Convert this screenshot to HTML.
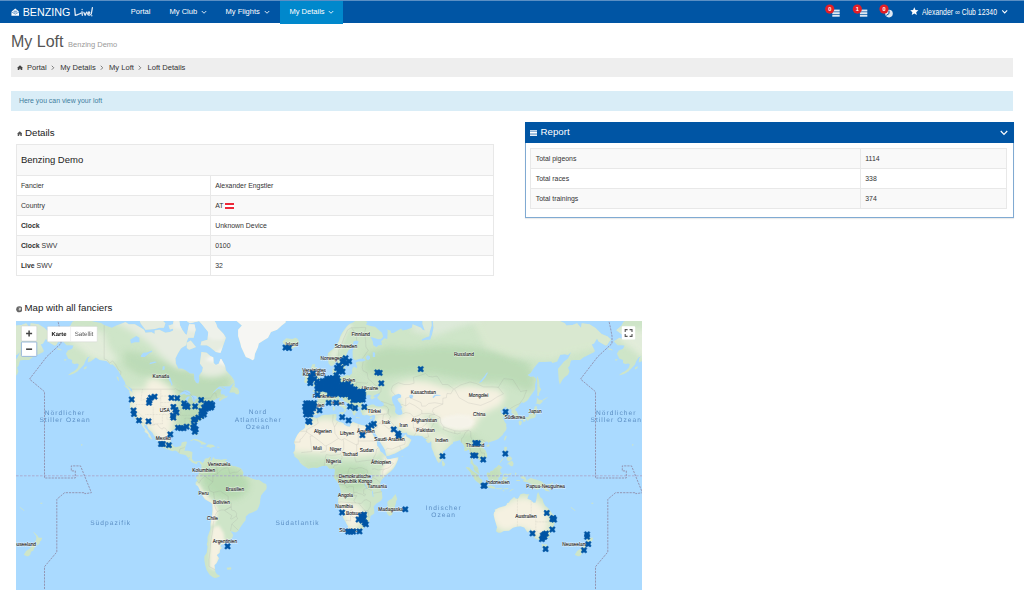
<!DOCTYPE html>
<html>
<head>
<meta charset="utf-8">
<title>My Loft</title>
<style>
*{box-sizing:border-box;margin:0;padding:0}
html,body{width:1024px;height:590px;overflow:hidden;background:#fff}
body{font-family:"Liberation Sans",sans-serif;font-size:7px;color:#333;position:relative}
.abs{position:absolute;white-space:nowrap}
/* navbar */
#nav{left:0;top:0;width:1024px;height:23px;background:#0055a4}
#navtop{left:0;top:0;width:1024px;height:1.2px;background:#5a8fc4}
#active{left:280px;top:1px;width:62.5px;height:22.5px;background:#0088cc}
.nv{color:#fff;font-size:7.55px;line-height:8px;top:8px}
.brand{color:#fff;font-size:10.7px;line-height:12px;top:5.6px;left:22.7px}
/* title */
#h1{left:11px;top:32.5px;font-size:16px;line-height:18px;color:#555}
#h1s{left:68.1px;top:39.8px;font-size:7.5px;line-height:9px;color:#999}
#bc{left:11px;top:57.8px;width:1002px;height:19.7px;background:#eeeeee}
.bct{top:63.9px;font-size:7.58px;line-height:8px;color:#333}
#alert{left:11px;top:90.8px;width:1002px;height:20.4px;background:#d9edf7}
#alertt{left:19px;top:96.8px;font-size:6.9px;line-height:8px;color:#3f7d9e}
.h3{font-size:9.7px;line-height:11px;color:#222}
/* tables */
table{border-collapse:collapse;position:absolute;table-layout:fixed}
td{border:1px solid #e8e8e8;font-size:6.9px;line-height:8px;padding:0 0 0 3.9px;height:20px;vertical-align:middle;color:#333;white-space:nowrap}
tr.odd td{background:#f9f9f9}
#rt td{padding-left:4.6px}
#report{left:524.7px;top:122px;width:489.2px;height:95.5px;border:1px solid #80aad2;background:#fff;box-shadow:0 1px 1px rgba(0,0,0,.08)}
#reporth{left:524.7px;top:122px;width:489.2px;height:20.5px;background:#0055a4}
#map{left:16px;top:321px;width:625.5px;height:269px;background:#aadaff;overflow:hidden}
</style>
</head>
<body>
<!-- NAVBAR -->
<div id="nav" class="abs"></div>
<div id="navtop" class="abs"></div>
<div id="active" class="abs"></div>
<svg class="abs" style="left:10.7px;top:7.6px" width="8.6" height="8.4" viewBox="0 0 19 17"><path d="M1 7.5 L9.5 0.5 L18 7.5 V16.5 H1 Z" fill="#fff"/><path d="M4 4.5 H15 V9 L9.5 12 L4 9 Z" fill="#e8f0fa"/><path d="M1 8 L9.5 12.8 L18 8" fill="none" stroke="#0055a4" stroke-width="1.2"/><path d="M6 6.2 H13 M6 8.2 H13" stroke="#0055a4" stroke-width="1"/></svg>
<div class="abs brand">BENZING</div>
<svg class="abs" style="left:70px;top:4px" width="28" height="16" viewBox="70 4 28 16"><g fill="none" stroke="#e4edf7" stroke-width="1.25" stroke-linecap="round" stroke-linejoin="round"><path d="M74.7 8.5 L75.3 15.4 C77 15 79.5 13.8 81.2 13.1"/><path d="M82 11.6 L82.3 15.3"/><path d="M82.1 9.3 L82.1 9.6"/><path d="M83.9 12.4 L85.1 15.3 L86.7 12.1"/><path d="M87.8 13.8 C89.4 13.8 90.3 12.4 89.4 12 C88.3 11.8 87.4 13.2 87.8 14.4 C88.3 15.5 89.8 15.4 90.6 14.6"/><path d="M92.4 7.6 L91.3 14"/><path d="M91.8 15.6 L91.8 15.8"/></g></svg>
<div class="abs nv" style="left:130.7px">Portal</div>
<div class="abs nv" style="left:169.5px">My Club</div>
<div class="abs nv" style="left:225.5px">My Flights</div>
<div class="abs nv" style="left:289.4px">My Details</div>
<svg class="abs chev" style="left:201px;top:9.8px" width="6" height="4.5" viewBox="0 0 12 9"><path d="M1.5 2 L6 6.5 L10.5 2" fill="none" stroke="#fff" stroke-width="1.7"/></svg>
<svg class="abs chev" style="left:263.7px;top:9.8px" width="6" height="4.5" viewBox="0 0 12 9"><path d="M1.5 2 L6 6.5 L10.5 2" fill="none" stroke="#fff" stroke-width="1.7"/></svg>
<svg class="abs chev" style="left:328.1px;top:9.8px" width="6" height="4.5" viewBox="0 0 12 9"><path d="M1.5 2 L6 6.5 L10.5 2" fill="none" stroke="#fff" stroke-width="1.7"/></svg>
<!-- right icons -->
<svg class="abs" style="left:815px;top:0" width="209" height="26" viewBox="815 0 209 26">
<g fill="#dfe8f3"><rect x="832.3" y="9.6" width="7.4" height="1.9"/><rect x="832.3" y="12.2" width="7.4" height="1.9"/><rect x="832.3" y="14.8" width="7.4" height="1.9"/>
<rect x="859.9" y="9.6" width="7.4" height="1.9"/><rect x="859.9" y="12.2" width="7.4" height="1.9"/><rect x="859.9" y="14.8" width="7.4" height="1.9"/>
<circle cx="889" cy="13.6" r="3.8"/></g>
<path d="M889 13.6 L889 10.6 M889 13.6 L886.3 15.4" stroke="#0055a4" stroke-width="1" fill="none"/>
<g fill="#e21e26"><circle cx="829.7" cy="9.1" r="4.6"/><circle cx="857.3" cy="9.1" r="4.6"/><circle cx="884" cy="9.1" r="4.6"/></g>
<g font-family="Liberation Sans" font-size="5.6" font-weight="bold" fill="#fff" text-anchor="middle"><text x="829.7" y="11">0</text><text x="857.3" y="11">1</text><text x="884" y="11">0</text></g>
<path transform="translate(910.2,7.3) scale(0.41)" d="M10 0 L12.9 6.6 L20 7.3 L14.6 12 L16.2 19 L10 15.3 L3.8 19 L5.4 12 L0 7.3 L7.1 6.6 Z" fill="#fff"/>
<path d="M1002.2 10.4 L1004.7 12.9 L1007.2 10.4" fill="none" stroke="#fff" stroke-width="1.05"/>
</svg>
<div class="abs nv" style="left:922px;top:8.1px;font-size:8.3px;transform:scaleX(.83);transform-origin:0 0">Alexander ∞ Club 12340</div>

<!-- TITLE -->
<div id="h1" class="abs">My Loft</div>
<div id="h1s" class="abs">Benzing Demo</div>
<div id="bc" class="abs"></div>
<svg class="abs" style="left:17px;top:64.5px" width="6" height="5.5" viewBox="0 0 12 11"><path d="M0 6 L6 0.5 L12 6 L10.5 6 L10.5 11 L7.3 11 L7.3 7.5 L4.7 7.5 L4.7 11 L1.5 11 L1.5 6 Z" fill="#444"/></svg>
<div class="abs bct" style="left:26.9px">Portal</div>
<svg class="abs" style="left:51px;top:64.9px" width="3.5" height="5.5" viewBox="0 0 7 11"><path d="M1.5 1.5 L5.5 5.5 L1.5 9.5" fill="none" stroke="#555" stroke-width="1.5"/></svg>
<div class="abs bct" style="left:60.3px">My Details</div>
<svg class="abs" style="left:99.5px;top:64.9px" width="3.5" height="5.5" viewBox="0 0 7 11"><path d="M1.5 1.5 L5.5 5.5 L1.5 9.5" fill="none" stroke="#555" stroke-width="1.5"/></svg>
<div class="abs bct" style="left:109px">My Loft</div>
<svg class="abs" style="left:138px;top:64.9px" width="3.5" height="5.5" viewBox="0 0 7 11"><path d="M1.5 1.5 L5.5 5.5 L1.5 9.5" fill="none" stroke="#555" stroke-width="1.5"/></svg>
<div class="abs bct" style="left:147.5px">Loft Details</div>
<div id="alert" class="abs"></div>
<div id="alertt" class="abs">Here you can view your loft</div>

<!-- DETAILS -->
<svg class="abs" style="left:16.5px;top:130.5px" width="5.5" height="5" viewBox="0 0 12 11"><path d="M0 6 L6 0.5 L12 6 L10.5 6 L10.5 11 L7.3 11 L7.3 7.5 L4.7 7.5 L4.7 11 L1.5 11 L1.5 6 Z" fill="#555"/></svg>
<div class="abs h3" style="left:25px;top:127.2px">Details</div>
<table style="left:16px;top:144.3px;width:478px">
<colgroup><col style="width:194.3px"><col></colgroup>
<tr class="odd"><td colspan="2" style="height:31px;font-size:9.5px;line-height:11px;color:#222;padding-bottom:1.6px">Benzing Demo</td></tr>
<tr><td>Fancier</td><td>Alexander Engstler</td></tr>
<tr class="odd"><td>Country</td><td>AT <span style="display:inline-block;width:8.6px;height:5.6px;vertical-align:-0.8px;background:linear-gradient(#ed2939 0,#ed2939 33%,#fff 33%,#fff 66%,#ed2939 66%)"></span></td></tr>
<tr><td><b>Clock</b></td><td>Unknown Device</td></tr>
<tr class="odd"><td><b>Clock</b> SWV</td><td>0100</td></tr>
<tr><td><b>Live</b> SWV</td><td>32</td></tr>
</table>

<!-- REPORT -->
<div id="report" class="abs"></div>
<div id="reporth" class="abs"></div>
<svg class="abs" style="left:530px;top:129.5px" width="7" height="6" viewBox="0 0 14 12"><g fill="#fff"><rect x="0" y="0.5" width="14" height="2.4"/><rect x="0" y="3.6" width="14" height="2.4"/><rect x="0" y="6.7" width="14" height="2.4"/><rect x="0" y="9.8" width="14" height="2"/></g></svg>
<div class="abs h3" style="left:540.5px;top:126px;color:#fff">Report</div>
<svg class="abs" style="left:999.8px;top:130px" width="8" height="6" viewBox="0 0 16 12"><path d="M1.5 2 L8 9 L14.5 2" fill="none" stroke="#fff" stroke-width="2.3"/></svg>
<table id="rt" style="left:530.2px;top:148px;width:477.3px">
<colgroup><col style="width:329.5px"><col></colgroup>
<tr class="odd"><td>Total pigeons</td><td>1114</td></tr>
<tr><td>Total races</td><td>338</td></tr>
<tr class="odd"><td>Total trainings</td><td>374</td></tr>
</table>

<!-- MAP -->
<svg class="abs" style="left:15.8px;top:306px" width="6.6" height="6.6" viewBox="0 0 12 12"><circle cx="6" cy="6" r="5.6" fill="#666"/><path d="M3 3 C5 2 6 4 5 6 C4 8 6 9 8 8 C9 6 10 5 9 3" fill="#ccc"/></svg>
<div class="abs h3" style="left:24.5px;top:301.6px">Map with all fanciers</div>
<div id="map" class="abs">
<!--MAPSTART--><svg class="abs" text-rendering="geometricPrecision" style="left:0;top:0;filter:blur(.35px)" width="625.5" height="269" viewBox="0 0 625.5 269">
<defs><clipPath id="landclip"><path d="M46.9,20.2 52.2,16.8 56.1,18.3 56.8,14.9 53.0,12.1 49.2,9.2 54.5,4.5 56.2,1.0 64.5,-3.7 71.4,-1.3 77.5,0.5 85.1,1.9 88.2,4.1 95.8,6.7 100.4,4.5 106.6,2.3 109.6,1.0 108.1,0.0 112.7,3.2 118.8,3.2 124.9,6.7 128.0,8.8 129.5,11.7 135.6,11.3 138.7,12.9 138.7,9.6 143.3,8.8 149.4,11.7 154.0,10.9 157.1,9.6 157.1,2.3 159.4,-7.1 163.2,0.0 164.0,4.5 166.2,8.8 169.3,12.9 170.8,13.7 173.1,3.2 178.5,3.6 179.6,8.8 177.7,16.8 172.4,16.8 170.8,20.6 170.1,24.2 166.2,26.6 164.7,27.7 161.7,32.7 159.4,37.5 159.8,42.6 162.4,47.8 166.2,47.8 169.3,49.2 173.9,52.5 178.0,52.7 178.2,58.5 180.0,61.7 182.3,62.7 183.4,59.8 183.1,54.6 186.1,50.6 186.9,46.4 183.9,42.6 184.6,37.5 185.4,31.1 190.7,31.7 194.6,35.3 197.2,36.2 197.6,42.0 199.9,44.1 203.0,42.6 204.5,38.1 205.3,38.1 209.1,45.0 209.9,49.2 212.9,52.7 216.0,55.9 218.3,59.8 218.7,61.5 216.8,62.5 213.7,65.2 209.1,65.2 203.0,65.4 200.7,67.5 197.6,70.5 196.1,72.8 198.4,71.0 202.2,68.0 205.6,68.7 204.5,70.5 204.8,72.8 206.0,74.6 209.9,75.5 212.2,74.4 210.6,76.6 206.8,78.1 203.7,80.4 202.7,78.3 205.3,76.1 201.5,77.2 198.4,78.9 196.4,80.2 195.8,82.1 196.9,84.0 194.6,84.8 190.7,86.2 190.7,88.6 188.9,90.0 188.0,93.1 187.7,93.7 188.3,96.7 186.1,98.0 184.6,99.3 182.3,100.9 180.0,102.8 179.4,105.4 180.8,109.3 181.6,111.9 181.2,114.5 179.7,114.6 178.8,112.8 177.3,110.2 177.4,108.1 175.4,106.3 173.1,106.7 170.1,105.8 167.8,105.8 167.3,107.7 164.7,107.6 160.4,106.9 158.6,107.9 155.2,110.3 155.1,113.3 154.3,119.1 155.2,121.9 156.8,124.5 159.2,126.2 163.2,125.5 165.2,124.4 165.6,121.6 169.3,120.6 171.1,121.1 170.1,124.1 169.3,126.0 168.9,128.9 168.1,129.8 172.4,129.8 176.4,131.0 176.2,134.4 175.9,137.6 177.3,139.7 179.3,140.8 181.7,140.2 183.9,140.0 185.7,141.3 185.4,143.0 184.3,143.0 183.9,141.6 182.3,140.8 181.1,141.9 180.9,143.3 179.3,142.7 177.3,141.9 176.0,141.4 174.2,139.6 172.7,138.6 172.8,137.4 170.2,134.7 169.6,134.0 167.0,133.6 164.0,132.9 160.9,130.3 158.9,129.4 156.3,130.2 152.5,128.7 148.6,127.3 145.6,126.0 142.5,123.6 142.8,120.8 141.0,117.8 137.9,114.5 136.6,112.1 134.7,110.0 132.3,108.1 131.0,104.2 128.3,103.3 128.4,106.0 130.7,108.4 132.6,111.6 134.1,114.1 135.2,116.3 136.4,118.0 135.6,118.5 132.6,115.8 132.3,113.3 129.2,111.2 128.3,110.2 129.5,109.0 126.9,106.0 124.8,101.9 122.8,99.1 119.4,98.2 117.4,94.2 116.5,91.9 114.5,88.6 113.8,86.8 114.1,81.5 114.2,74.6 113.1,69.6 115.7,70.5 116.5,72.1 116.0,68.2 113.4,65.9 109.6,63.9 108.9,61.0 106.6,57.2 104.6,54.1 102.7,50.6 99.7,46.4 96.6,43.5 94.3,43.5 90.5,39.9 83.6,39.0 79.8,36.5 76.7,39.0 74.4,40.5 71.7,41.4 72.1,37.5 74.4,35.3 71.4,36.5 69.1,40.5 68.0,43.5 64.5,47.2 61.4,50.6 57.6,52.7 54.5,53.8 51.8,54.3 55.3,51.4 58.3,50.0 61.4,47.2 62.9,43.5 61.4,42.6 58.3,42.9 56.1,42.0 56.1,39.0 52.2,37.5 50.7,34.3 49.9,32.7 51.8,29.4 56.1,27.7 57.6,24.5 54.5,24.2 50.7,24.2ZM597.9,20.2 603.2,16.8 607.0,18.3 607.8,14.9 604.0,12.1 600.2,9.2 605.5,4.5 607.2,1.0 615.5,-3.7 622.4,-1.3 628.5,0.5 636.1,1.9 639.2,4.1 646.8,6.7 651.4,4.5 657.6,2.3 660.6,1.0 659.1,0.0 663.7,3.2 669.8,3.2 675.9,6.7 679.0,8.8 680.5,11.7 686.6,11.3 689.7,12.9 689.7,9.6 694.3,8.8 700.4,11.7 705.0,10.9 708.1,9.6 708.1,2.3 710.4,-7.1 714.2,0.0 715.0,4.5 717.2,8.8 720.3,12.9 721.8,13.7 724.1,3.2 729.5,3.6 730.6,8.8 728.7,16.8 723.4,16.8 721.8,20.6 721.1,24.2 717.2,26.6 715.7,27.7 712.7,32.7 710.4,37.5 710.8,42.6 713.4,47.8 717.2,47.8 720.3,49.2 724.9,52.5 729.0,52.7 729.2,58.5 731.0,61.7 733.3,62.7 734.4,59.8 734.1,54.6 737.1,50.6 737.9,46.4 734.9,42.6 735.6,37.5 736.4,31.1 741.7,31.7 745.6,35.3 748.2,36.2 748.6,42.0 750.9,44.1 754.0,42.6 755.5,38.1 756.3,38.1 760.1,45.0 760.9,49.2 763.9,52.7 767.0,55.9 769.3,59.8 769.7,61.5 767.8,62.5 764.7,65.2 760.1,65.2 754.0,65.4 751.7,67.5 748.6,70.5 747.1,72.8 749.4,71.0 753.2,68.0 756.6,68.7 755.5,70.5 755.8,72.8 757.0,74.6 760.9,75.5 763.2,74.4 761.6,76.6 757.8,78.1 754.7,80.4 753.7,78.3 756.3,76.1 752.5,77.2 749.4,78.9 747.4,80.2 746.8,82.1 747.9,84.0 745.6,84.8 741.7,86.2 741.7,88.6 739.9,90.0 739.0,93.1 738.7,93.7 739.3,96.7 737.1,98.0 735.6,99.3 733.3,100.9 731.0,102.8 730.4,105.4 731.8,109.3 732.6,111.9 732.2,114.5 730.7,114.6 729.8,112.8 728.3,110.2 728.4,108.1 726.4,106.3 724.1,106.7 721.1,105.8 718.8,105.8 718.3,107.7 715.7,107.6 711.4,106.9 709.6,107.9 706.2,110.3 706.1,113.3 705.3,119.1 706.2,121.9 707.8,124.5 710.2,126.2 714.2,125.5 716.2,124.4 716.6,121.6 720.3,120.6 722.1,121.1 721.1,124.1 720.3,126.0 719.9,128.9 719.1,129.8 723.4,129.8 727.4,131.0 727.2,134.4 726.9,137.6 728.3,139.7 730.3,140.8 732.7,140.2 734.9,140.0 736.7,141.3 736.4,143.0 735.3,143.0 734.9,141.6 733.3,140.8 732.1,141.9 731.9,143.3 730.3,142.7 728.3,141.9 727.0,141.4 725.2,139.6 723.7,138.6 723.8,137.4 721.2,134.7 720.6,134.0 718.0,133.6 715.0,132.9 711.9,130.3 709.9,129.4 707.3,130.2 703.5,128.7 699.6,127.3 696.6,126.0 693.5,123.6 693.8,120.8 692.0,117.8 688.9,114.5 687.6,112.1 685.7,110.0 683.3,108.1 682.0,104.2 679.3,103.3 679.4,106.0 681.7,108.4 683.6,111.6 685.1,114.1 686.2,116.3 687.4,118.0 686.6,118.5 683.6,115.8 683.3,113.3 680.2,111.2 679.3,110.2 680.5,109.0 677.9,106.0 675.8,101.9 673.8,99.1 670.4,98.2 668.4,94.2 667.5,91.9 665.5,88.6 664.8,86.8 665.1,81.5 665.2,74.6 664.1,69.6 666.7,70.5 667.5,72.1 667.0,68.2 664.4,65.9 660.6,63.9 659.9,61.0 657.6,57.2 655.6,54.1 653.7,50.6 650.7,46.4 647.6,43.5 645.3,43.5 641.5,39.9 634.6,39.0 630.8,36.5 627.7,39.0 625.4,40.5 622.7,41.4 623.1,37.5 625.4,35.3 622.4,36.5 620.1,40.5 619.0,43.5 615.5,47.2 612.4,50.6 608.6,52.7 605.5,53.8 602.8,54.3 606.3,51.4 609.3,50.0 612.4,47.2 613.9,43.5 612.4,42.6 609.3,42.9 607.0,42.0 607.0,39.0 603.2,37.5 601.7,34.3 600.9,32.7 602.8,29.4 607.0,27.7 608.6,24.5 605.5,24.2 601.7,24.2ZM220.6,0.0 225.9,4.5 222.1,8.8 222.1,14.9 224.4,22.4 225.2,25.9 227.5,31.1 229.8,35.9 233.6,37.5 236.7,39.3 238.2,38.1 239.0,32.7 242.0,25.9 242.8,22.4 247.4,19.5 252.0,16.8 255.0,10.9 261.1,8.8 265.7,4.5 269.6,1.4 270.3,-7.1 273.4,-23.3 219.8,-23.3 220.6,-7.1ZM266.5,20.6 270.3,17.2 276.4,17.9 279.5,16.8 281.8,17.9 283.3,22.4 281.0,24.9 276.4,27.7 272.6,27.7 269.3,26.6 270.3,24.2 267.3,22.8ZM185.7,141.3 186.5,142.2 188.3,139.9 188.4,138.3 189.5,137.4 192.3,136.9 194.3,135.4 194.9,137.6 194.1,139.1 195.3,139.9 196.9,136.8 196.9,135.7 199.2,138.0 203.0,138.2 205.3,138.8 209.1,138.0 209.4,139.4 210.9,141.4 213.7,142.5 216.0,144.8 219.8,145.5 224.4,147.1 225.9,148.4 227.5,151.7 226.7,154.5 229.8,155.6 231.3,155.4 235.9,157.6 240.5,158.9 242.8,158.8 245.1,160.2 247.4,162.0 250.1,162.9 250.7,165.5 250.4,168.3 247.4,171.4 245.1,174.6 244.3,178.5 244.0,182.2 242.8,185.8 241.2,189.0 237.9,190.7 235.1,192.0 233.1,192.4 229.8,195.4 229.6,199.2 227.5,201.8 224.4,206.2 222.1,209.9 219.8,211.6 216.8,210.8 214.6,210.3 216.5,212.7 217.2,214.6 215.8,217.5 212.2,219.2 208.8,219.4 208.8,223.0 204.5,223.4 204.5,226.5 206.7,226.5 204.2,228.6 203.7,231.8 200.7,234.0 203.0,237.3 200.7,241.9 198.4,244.3 199.2,248.7 199.2,250.5 200.7,253.1 204.2,254.9 202.2,256.3 199.2,257.1 196.9,256.3 193.8,253.9 190.7,249.2 189.2,244.3 188.4,239.6 188.3,235.5 190.7,231.8 191.5,225.5 190.7,223.4 191.5,220.4 191.5,215.9 192.7,212.7 194.4,208.1 194.6,202.7 195.3,198.3 196.1,194.0 196.6,189.0 196.4,183.2 194.6,181.4 191.5,179.8 188.9,178.2 187.2,175.8 185.8,173.0 183.9,169.1 182.0,165.2 179.7,163.7 179.6,161.4 181.1,159.7 181.7,158.3 180.0,157.9 180.3,156.0 181.6,154.0 183.1,152.2 183.9,150.7 185.4,148.7 185.4,146.1 185.4,143.8 184.3,143.0ZM295.0,95.7 295.9,95.6 299.4,96.7 300.9,97.1 304.0,95.7 305.5,94.4 308.6,93.8 312.4,93.8 315.5,93.5 319.0,92.9 320.8,93.5 320.2,94.6 320.7,96.3 319.6,98.6 320.8,99.8 323.1,101.1 324.2,101.1 327.4,102.2 328.2,103.8 331.6,105.4 333.8,105.8 334.6,104.6 334.6,102.4 336.9,101.1 339.5,101.9 342.3,103.1 345.3,104.0 348.4,104.7 349.9,104.0 351.4,103.5 353.4,104.0 356.3,104.0 357.4,107.2 356.5,110.2 355.3,109.0 353.9,106.5 353.9,108.1 355.3,110.2 356.0,111.9 357.6,115.0 358.5,116.8 360.6,120.0 360.9,121.6 361.2,124.9 362.9,126.5 364.5,130.5 366.8,132.1 369.0,134.4 370.3,135.2 370.1,136.6 371.3,138.3 374.4,137.9 377.5,137.2 382.4,136.2 382.1,138.5 380.5,142.2 379.0,145.3 377.5,147.6 374.4,150.7 373.3,151.4 370.6,153.7 368.3,156.0 366.8,157.6 365.5,159.1 364.8,160.6 363.7,163.7 364.5,165.2 364.5,167.6 364.9,169.9 366.0,170.7 366.1,173.8 366.4,176.9 365.2,179.6 362.2,181.4 360.5,182.5 357.6,185.4 358.3,189.0 358.3,192.4 354.5,194.9 354.2,197.4 353.6,200.0 351.4,202.5 348.4,206.2 346.7,208.1 343.3,209.9 339.2,210.1 334.6,211.4 332.3,210.4 332.0,207.7 332.0,205.3 330.5,202.7 329.3,200.2 327.3,196.9 326.2,190.7 324.2,185.8 322.1,182.5 322.1,179.3 322.8,176.1 324.5,173.5 325.1,171.4 324.2,168.0 322.8,163.7 322.4,162.2 320.8,160.2 318.5,157.6 317.5,155.6 318.5,153.7 318.7,151.4 319.0,149.1 317.8,147.6 316.2,147.6 313.9,147.9 312.4,146.8 310.9,144.8 309.2,144.7 306.3,145.0 304.0,145.8 300.9,147.1 297.9,146.4 294.8,147.1 292.5,147.8 289.5,146.1 286.4,143.9 283.8,141.4 282.6,139.1 281.0,137.6 278.4,135.5 278.3,133.6 277.2,131.7 278.7,129.7 279.1,126.5 279.2,124.1 278.0,121.6 279.5,117.5 281.3,114.1 284.1,110.3 287.2,108.4 289.0,106.7 289.0,103.7 291.0,100.4 293.6,99.1ZM379.5,173.0 381.3,178.2 380.2,180.1 379.8,182.5 377.5,189.9 375.9,194.0 373.2,194.9 370.9,192.4 370.3,189.0 371.8,185.8 371.3,180.9 372.9,179.3 375.9,177.7 377.5,175.4ZM-260.8,93.5 -261.5,90.2 -260.5,86.6 -260.5,83.5 -261.2,81.5 -259.2,80.0 -255.4,80.4 -252.4,80.6 -249.8,80.6 -248.8,78.3 -248.7,75.5 -250.4,72.8 -251.6,71.4 -253.9,70.8 -254.3,69.6 -251.6,68.7 -249.4,69.2 -249.8,66.6 -248.8,67.3 -246.8,67.1 -244.7,65.6 -244.6,63.7 -241.6,62.5 -240.6,60.5 -239.7,58.5 -237.8,57.5 -236.3,57.2 -234.4,57.0 -233.5,55.9 -233.8,53.3 -234.6,51.7 -234.4,47.8 -232.5,47.2 -230.8,45.8 -231.2,49.2 -230.5,50.0 -231.7,51.9 -232.0,53.8 -230.5,55.9 -228.6,55.4 -226.3,54.9 -225.3,56.2 -221.7,54.6 -218.7,54.1 -217.2,54.9 -216.4,53.5 -214.9,52.5 -214.9,48.4 -214.1,46.4 -212.6,45.8 -210.3,47.5 -209.8,45.5 -211.0,42.9 -211.0,41.4 -208.7,40.5 -204.1,40.5 -201.1,39.3 -203.4,37.5 -207.2,37.8 -211.8,39.3 -214.1,37.5 -214.4,34.3 -214.4,29.4 -212.6,26.6 -209.5,23.1 -208.3,20.6 -210.3,19.5 -213.3,20.2 -214.4,24.2 -215.6,27.0 -218.7,29.4 -220.7,33.7 -220.7,36.8 -218.4,38.7 -219.4,41.1 -221.4,43.5 -221.7,46.4 -222.5,50.0 -225.1,50.6 -225.3,52.2 -227.1,52.2 -227.9,49.8 -228.9,45.8 -229.9,42.0 -230.8,39.6 -231.7,42.0 -234.0,44.4 -236.3,45.0 -238.4,42.6 -239.0,38.4 -239.3,34.3 -239.0,32.0 -236.3,29.7 -233.5,27.7 -230.9,24.9 -227.9,19.5 -226.8,15.6 -224.8,11.7 -222.5,8.4 -220.2,5.4 -217.9,3.2 -214.1,1.4 -211.8,0.0 -207.7,-2.7 -204.1,-1.3 -199.6,1.0 -201.1,3.6 -196.5,5.0 -191.9,5.8 -185.0,11.7 -183.9,15.6 -185.8,17.9 -188.8,18.3 -193.4,16.8 -196.5,16.0 -194.2,20.6 -193.7,24.2 -190.4,26.3 -188.8,24.5 -185.0,23.8 -185.8,20.2 -182.7,17.2 -179.7,17.9 -179.3,9.6 -180.7,8.4 -176.6,9.6 -175.8,12.1 -173.5,12.1 -165.9,7.5 -164.4,9.6 -159.8,8.4 -155.2,6.7 -154.4,3.2 -149.0,5.4 -146.0,6.7 -144.5,8.8 -142.2,9.6 -144.5,3.2 -144.5,-1.3 -142.9,-12.2 -136.8,-12.2 -135.9,-4.7 -135.4,4.5 -137.3,10.9 -137.7,15.3 -141.4,16.4 -145.2,18.3 -145.2,19.8 -140.6,18.7 -136.8,18.7 -134.8,12.9 -133.4,6.7 -134.4,-2.3 -132.8,-9.6 -129.1,-7.1 -123.0,-6.1 -120.0,-2.3 -120.0,-9.6 -124.6,-14.8 -109.2,-29.4 -86.3,-43.1 -74.0,-17.6 -52.6,-12.2 -48.0,-2.3 -43.4,-4.7 -32.7,-9.6 -17.4,-4.7 -2.1,2.3 -0.6,4.5 5.5,4.1 10.1,2.3 14.0,6.7 14.7,2.3 22.4,3.2 28.5,7.1 34.6,12.9 40.7,15.6 44.1,18.7 42.3,20.6 40.0,24.2 38.4,24.5 31.6,20.6 30.0,17.6 27.0,22.4 24.7,23.5 27.7,29.4 27.4,31.1 20.8,34.3 16.3,36.5 13.2,39.0 7.1,39.0 4.0,39.6 2.5,45.0 1.0,46.4 2.5,50.6 1.0,53.8 -2.1,55.9 -4.4,58.5 -7.2,63.5 -8.2,59.8 -8.7,53.3 -9.0,47.8 -6.7,45.0 -2.9,40.5 1.0,37.5 3.2,33.3 4.0,31.1 1.0,34.0 -2.1,33.3 -6.7,33.7 -9.8,40.5 -14.4,42.0 -15.9,40.5 -23.5,41.1 -28.1,41.1 -32.7,46.4 -36.5,51.9 -39.6,54.1 -36.5,55.9 -33.5,55.4 -30.7,58.0 -32.0,63.5 -32.0,68.2 -34.3,71.7 -37.3,76.1 -39.6,79.4 -43.4,81.9 -45.1,81.3 -47.0,82.9 -48.5,85.6 -51.1,87.6 -51.9,89.0 -50.3,90.6 -48.9,93.5 -48.9,96.3 -50.3,97.2 -53.4,98.4 -53.7,96.3 -53.2,93.5 -55.7,91.9 -55.4,89.0 -56.8,87.8 -60.3,89.4 -61.5,90.0 -60.3,86.6 -61.8,85.8 -64.9,89.2 -66.9,89.6 -65.6,91.9 -64.6,93.1 -61.8,92.3 -59.4,93.1 -61.8,94.4 -64.1,96.7 -63.3,98.7 -62.1,101.3 -60.4,103.3 -61.0,104.9 -60.3,106.7 -61.0,109.3 -63.3,111.9 -64.4,114.1 -66.4,115.8 -68.7,118.0 -72.2,119.5 -75.6,120.5 -77.9,121.3 -78.3,122.8 -79.1,120.8 -81.2,120.6 -83.7,121.9 -85.1,124.9 -84.0,127.0 -81.4,129.5 -79.9,133.6 -79.9,136.3 -82.5,138.5 -83.5,138.6 -86.3,141.1 -86.6,139.1 -88.6,138.2 -90.1,136.0 -92.4,134.9 -93.0,133.6 -93.9,135.2 -95.0,138.3 -94.3,140.2 -93.2,143.3 -91.6,144.1 -89.4,146.1 -88.6,148.4 -88.6,150.7 -87.5,152.4 -88.7,152.4 -91.6,150.4 -93.2,148.4 -93.5,145.3 -94.7,143.8 -96.5,142.2 -96.2,139.1 -95.9,136.0 -97.0,132.9 -97.5,129.7 -98.5,128.4 -100.8,130.0 -102.7,129.7 -102.4,126.5 -103.6,123.6 -106.2,120.8 -107.0,119.0 -108.5,119.6 -110.8,120.3 -113.8,120.8 -114.1,122.4 -116.1,123.7 -118.4,126.0 -121.0,128.6 -124.1,130.5 -124.2,134.1 -124.9,136.8 -124.9,138.6 -126.1,140.2 -127.6,141.6 -128.4,142.1 -129.9,139.9 -131.4,136.3 -132.5,134.4 -133.7,130.8 -135.3,127.3 -135.6,124.9 -135.6,121.6 -136.0,120.0 -136.8,121.6 -139.1,121.9 -141.4,119.6 -139.9,118.3 -142.2,117.5 -144.5,115.3 -149.0,114.5 -152.9,114.8 -156.7,114.3 -159.5,113.6 -160.1,111.6 -162.8,112.1 -165.9,111.6 -168.9,109.0 -169.7,106.7 -172.0,105.6 -173.5,106.3 -173.1,108.1 -172.3,110.2 -170.5,112.1 -170.2,113.6 -168.2,113.3 -168.2,115.6 -166.6,116.3 -163.9,116.1 -161.3,113.3 -160.5,115.8 -157.5,117.3 -155.5,119.1 -157.5,122.4 -158.7,124.9 -161.3,126.6 -163.6,128.1 -167.1,129.7 -172.0,132.4 -175.1,133.6 -178.1,134.7 -180.4,134.9 -180.9,133.6 -181.5,131.3 -182.0,128.9 -184.2,125.2 -187.0,120.8 -188.1,117.5 -190.1,115.0 -192.7,110.7 -193.4,109.5 -193.4,107.2 -194.2,109.3 -194.5,110.2 -195.7,109.0 -197.1,106.5 -197.4,104.2 -194.5,104.0 -193.6,101.9 -192.5,99.1 -191.9,95.7 -191.6,94.2 -194.2,94.0 -196.5,95.2 -200.2,93.8 -202.6,94.6 -204.9,93.8 -205.2,91.9 -206.4,90.6 -206.0,88.6 -206.9,87.6 -204.9,86.8 -202.6,86.6 -202.3,85.2 -198.8,85.0 -195.7,83.5 -193.1,83.5 -191.1,85.0 -188.8,85.6 -185.8,85.6 -183.3,84.4 -183.5,82.1 -186.5,80.0 -188.8,78.1 -189.9,76.6 -188.1,74.6 -186.8,72.4 -189.6,72.8 -193.1,74.4 -193.4,75.7 -191.1,76.6 -192.7,77.2 -195.0,78.5 -195.7,78.1 -197.1,76.3 -195.4,74.8 -198.3,73.7 -200.0,74.1 -201.5,76.6 -203.1,78.9 -204.1,81.0 -204.5,83.1 -204.0,84.4 -202.6,85.2 -204.1,85.6 -205.7,86.2 -206.9,87.0 -207.2,86.0 -209.5,85.8 -210.7,87.2 -212.0,86.6 -212.3,88.6 -211.3,90.0 -210.3,91.1 -210.3,92.1 -211.8,91.7 -211.5,92.9 -212.1,94.4 -212.7,94.6 -213.8,93.8 -214.6,91.9 -214.4,91.0 -215.3,89.8 -216.4,88.2 -217.3,86.6 -217.2,84.6 -217.9,83.1 -220.2,81.5 -222.5,80.2 -224.0,78.5 -224.8,76.8 -226.0,77.0 -226.0,75.7 -228.0,76.3 -228.2,78.3 -226.2,80.4 -225.3,82.7 -222.5,83.7 -222.5,84.8 -220.2,86.0 -218.7,87.2 -218.8,88.0 -221.0,86.6 -221.6,88.2 -220.8,89.6 -221.7,90.8 -223.0,91.7 -222.8,90.4 -222.5,88.6 -223.3,87.4 -224.8,86.2 -227.1,85.0 -228.3,84.0 -230.2,82.5 -231.2,80.4 -232.0,79.1 -233.4,78.5 -235.5,79.8 -237.1,81.0 -238.9,80.8 -240.9,80.4 -242.1,81.5 -242.1,82.9 -241.9,84.0 -243.6,84.8 -245.8,86.0 -247.5,88.6 -246.7,90.0 -248.1,92.1 -250.1,93.8 -253.7,94.0 -255.3,95.2 -256.6,94.2 -257.4,93.3 -259.2,93.5ZM290.2,93.5 289.5,90.2 290.5,86.6 290.5,83.5 289.8,81.5 291.8,80.0 295.6,80.4 298.6,80.6 301.2,80.6 302.2,78.3 302.3,75.5 300.6,72.8 299.4,71.4 297.1,70.8 296.7,69.6 299.4,68.7 301.6,69.2 301.2,66.6 302.2,67.3 304.2,67.1 306.3,65.6 306.4,63.7 309.4,62.5 310.4,60.5 311.3,58.5 313.2,57.5 314.7,57.2 316.6,57.0 317.5,55.9 317.2,53.3 316.4,51.7 316.6,47.8 318.5,47.2 320.2,45.8 319.8,49.2 320.5,50.0 319.3,51.9 319.0,53.8 320.5,55.9 322.4,55.4 324.7,54.9 325.7,56.2 329.3,54.6 332.3,54.1 333.8,54.9 334.6,53.5 336.1,52.5 336.1,48.4 336.9,46.4 338.4,45.8 340.7,47.5 341.2,45.5 340.0,42.9 340.0,41.4 342.3,40.5 346.9,40.5 349.9,39.3 347.6,37.5 343.8,37.8 339.2,39.3 336.9,37.5 336.6,34.3 336.6,29.4 338.4,26.6 341.5,23.1 342.7,20.6 340.7,19.5 337.7,20.2 336.6,24.2 335.4,27.0 332.3,29.4 330.3,33.7 330.3,36.8 332.6,38.7 331.6,41.1 329.6,43.5 329.3,46.4 328.5,50.0 325.9,50.6 325.7,52.2 323.9,52.2 323.1,49.8 322.1,45.8 321.1,42.0 320.2,39.6 319.3,42.0 317.0,44.4 314.7,45.0 312.6,42.6 312.0,38.4 311.7,34.3 312.0,32.0 314.7,29.7 317.5,27.7 320.1,24.9 323.1,19.5 324.2,15.6 326.2,11.7 328.5,8.4 330.8,5.4 333.1,3.2 336.9,1.4 339.2,0.0 343.3,-2.7 346.9,-1.3 351.4,1.0 349.9,3.6 354.5,5.0 359.1,5.8 366.0,11.7 367.1,15.6 365.2,17.9 362.2,18.3 357.6,16.8 354.5,16.0 356.8,20.6 357.3,24.2 360.6,26.3 362.2,24.5 366.0,23.8 365.2,20.2 368.3,17.2 371.3,17.9 371.7,9.6 370.3,8.4 374.4,9.6 375.2,12.1 377.5,12.1 385.1,7.5 386.6,9.6 391.2,8.4 395.8,6.7 396.6,3.2 402.0,5.4 405.0,6.7 406.5,8.8 408.8,9.6 406.5,3.2 406.5,-1.3 408.1,-12.2 414.2,-12.2 415.1,-4.7 415.6,4.5 413.7,10.9 413.3,15.3 409.6,16.4 405.8,18.3 405.8,19.8 410.4,18.7 414.2,18.7 416.2,12.9 417.6,6.7 416.6,-2.3 418.2,-9.6 421.9,-7.1 428.0,-6.1 431.0,-2.3 431.0,-9.6 426.4,-14.8 441.8,-29.4 464.7,-43.1 477.0,-17.6 498.4,-12.2 503.0,-2.3 507.6,-4.7 518.3,-9.6 533.6,-4.7 548.9,2.3 550.4,4.5 556.5,4.1 561.1,2.3 565.0,6.7 565.7,2.3 573.4,3.2 579.5,7.1 585.6,12.9 591.7,15.6 595.1,18.7 593.3,20.6 591.0,24.2 589.4,24.5 582.6,20.6 581.0,17.6 578.0,22.4 575.7,23.5 578.7,29.4 578.4,31.1 571.8,34.3 567.3,36.5 564.2,39.0 558.1,39.0 555.0,39.6 553.5,45.0 552.0,46.4 553.5,50.6 552.0,53.8 548.9,55.9 546.6,58.5 543.8,63.5 542.8,59.8 542.3,53.3 542.0,47.8 544.3,45.0 548.1,40.5 552.0,37.5 554.2,33.3 555.0,31.1 552.0,34.0 548.9,33.3 544.3,33.7 541.2,40.5 536.6,42.0 535.1,40.5 527.5,41.1 522.9,41.1 518.3,46.4 514.5,51.9 511.4,54.1 514.5,55.9 517.5,55.4 520.3,58.0 519.0,63.5 519.0,68.2 516.7,71.7 513.7,76.1 511.4,79.4 507.6,81.9 505.9,81.3 504.0,82.9 502.5,85.6 499.9,87.6 499.1,89.0 500.7,90.6 502.1,93.5 502.1,96.3 500.7,97.2 497.6,98.4 497.3,96.3 497.8,93.5 495.3,91.9 495.6,89.0 494.2,87.8 490.7,89.4 489.5,90.0 490.7,86.6 489.2,85.8 486.1,89.2 484.1,89.6 485.4,91.9 486.4,93.1 489.2,92.3 491.6,93.1 489.2,94.4 486.9,96.7 487.7,98.7 488.9,101.3 490.6,103.3 490.0,104.9 490.7,106.7 490.0,109.3 487.7,111.9 486.6,114.1 484.6,115.8 482.3,118.0 478.8,119.5 475.4,120.5 473.1,121.3 472.7,122.8 471.9,120.8 469.8,120.6 467.3,121.9 465.9,124.9 467.0,127.0 469.6,129.5 471.1,133.6 471.1,136.3 468.5,138.5 467.5,138.6 464.7,141.1 464.4,139.1 462.4,138.2 460.9,136.0 458.6,134.9 458.0,133.6 457.1,135.2 456.0,138.3 456.7,140.2 457.8,143.3 459.4,144.1 461.6,146.1 462.4,148.4 462.4,150.7 463.5,152.4 462.3,152.4 459.4,150.4 457.8,148.4 457.5,145.3 456.3,143.8 454.5,142.2 454.8,139.1 455.1,136.0 454.0,132.9 453.5,129.7 452.5,128.4 450.2,130.0 448.3,129.7 448.6,126.5 447.4,123.6 444.8,120.8 444.0,119.0 442.5,119.6 440.2,120.3 437.2,120.8 436.9,122.4 434.9,123.7 432.6,126.0 430.0,128.6 426.9,130.5 426.8,134.1 426.1,136.8 426.1,138.6 424.9,140.2 423.4,141.6 422.6,142.1 421.1,139.9 419.6,136.3 418.5,134.4 417.3,130.8 415.7,127.3 415.4,124.9 415.4,121.6 415.0,120.0 414.2,121.6 411.9,121.9 409.6,119.6 411.1,118.3 408.8,117.5 406.5,115.3 402.0,114.5 398.1,114.8 394.3,114.3 391.5,113.6 390.9,111.6 388.2,112.1 385.1,111.6 382.1,109.0 381.3,106.7 379.0,105.6 377.5,106.3 377.9,108.1 378.7,110.2 380.5,112.1 380.8,113.6 382.8,113.3 382.8,115.6 384.4,116.3 387.1,116.1 389.7,113.3 390.5,115.8 393.5,117.3 395.5,119.1 393.5,122.4 392.3,124.9 389.7,126.6 387.4,128.1 383.9,129.7 379.0,132.4 375.9,133.6 372.9,134.7 370.6,134.9 370.1,133.6 369.5,131.3 369.0,128.9 366.8,125.2 364.0,120.8 362.9,117.5 360.9,115.0 358.3,110.7 357.6,109.5 357.6,107.2 356.8,109.3 356.5,110.2 355.3,109.0 353.9,106.5 353.6,104.2 356.5,104.0 357.4,101.9 358.5,99.1 359.1,95.7 359.4,94.2 356.8,94.0 354.5,95.2 350.8,93.8 348.4,94.6 346.1,93.8 345.8,91.9 344.6,90.6 345.0,88.6 344.1,87.6 346.1,86.8 348.4,86.6 348.7,85.2 352.2,85.0 355.3,83.5 357.9,83.5 359.9,85.0 362.2,85.6 365.2,85.6 367.7,84.4 367.5,82.1 364.5,80.0 362.2,78.1 361.1,76.6 362.9,74.6 364.2,72.4 361.4,72.8 357.9,74.4 357.6,75.7 359.9,76.6 358.3,77.2 356.0,78.5 355.3,78.1 353.9,76.3 355.6,74.8 352.7,73.7 351.0,74.1 349.5,76.6 347.9,78.9 346.9,81.0 346.5,83.1 347.0,84.4 348.4,85.2 346.9,85.6 345.3,86.2 344.1,87.0 343.8,86.0 341.5,85.8 340.3,87.2 339.0,86.6 338.7,88.6 339.7,90.0 340.7,91.1 340.7,92.1 339.2,91.7 339.5,92.9 338.9,94.4 338.3,94.6 337.2,93.8 336.4,91.9 336.6,91.0 335.7,89.8 334.6,88.2 333.7,86.6 333.8,84.6 333.1,83.1 330.8,81.5 328.5,80.2 327.0,78.5 326.2,76.8 325.0,77.0 325.0,75.7 323.0,76.3 322.8,78.3 324.8,80.4 325.7,82.7 328.5,83.7 328.5,84.8 330.8,86.0 332.3,87.2 332.2,88.0 330.0,86.6 329.4,88.2 330.2,89.6 329.3,90.8 328.0,91.7 328.2,90.4 328.5,88.6 327.7,87.4 326.2,86.2 323.9,85.0 322.7,84.0 320.8,82.5 319.8,80.4 319.0,79.1 317.6,78.5 315.5,79.8 313.9,81.0 312.1,80.8 310.1,80.4 308.9,81.5 308.9,82.9 309.1,84.0 307.4,84.8 305.2,86.0 303.5,88.6 304.3,90.0 302.9,92.1 300.9,93.8 297.3,94.0 295.7,95.2 294.4,94.2 293.6,93.3 291.8,93.5ZM295.3,65.6 298.6,65.2 302.5,64.2 306.1,63.0 305.2,62.2 306.6,59.5 304.5,58.5 304.0,57.0 303.7,55.1 301.7,53.3 300.9,51.1 299.4,50.6 300.9,46.4 298.6,45.8 299.4,43.2 296.3,43.2 295.1,46.4 295.6,49.8 296.3,51.9 296.7,53.8 298.6,53.8 299.4,56.4 299.3,57.7 297.1,57.7 297.6,59.8 296.0,61.5 299.1,62.5 297.4,63.2ZM294.8,60.5 294.5,57.2 295.6,54.6 294.1,52.7 291.4,52.7 288.7,55.4 289.0,57.7 288.1,61.0 289.5,62.2 291.8,61.5ZM323.1,91.5 327.9,91.1 327.3,94.0 323.1,92.3ZM316.6,85.6 318.8,86.0 318.7,89.2 317.0,89.6 316.9,87.0ZM318.4,81.5 318.5,83.5 318.1,84.8 317.2,82.9ZM340.0,96.1 344.3,96.7 344.1,97.2 340.1,96.9ZM353.4,97.2 354.5,96.5 356.8,95.9 356.0,97.2 354.5,98.0ZM521.3,55.1 523.2,59.8 523.6,65.9 525.2,68.2 522.9,72.8 523.3,74.6 521.3,75.0 521.3,70.5 521.3,63.5 520.9,57.7ZM518.3,84.6 520.6,81.5 520.9,76.3 522.9,78.7 526.4,78.9 526.7,80.8 523.6,83.5 520.6,82.5 519.0,83.5ZM520.6,85.0 521.3,88.6 519.8,91.5 519.7,95.4 518.3,96.9 516.7,97.2 513.7,98.0 511.8,100.0 510.6,98.2 507.6,98.6 504.5,99.1 504.5,98.0 507.6,96.3 512.2,95.9 513.4,93.1 516.0,92.7 517.5,90.6 518.3,87.6 518.7,85.6ZM504.5,99.5 506.0,100.9 505.0,104.0 503.3,104.2 502.5,100.9 503.7,99.5ZM506.8,99.1 509.9,98.7 509.6,100.0 507.6,101.3ZM490.0,114.6 490.7,115.8 488.9,120.0 488.0,118.3 488.9,115.8ZM470.4,124.4 472.4,123.2 473.9,123.9 472.4,125.8 470.4,125.5ZM488.4,125.7 491.0,126.0 490.7,128.9 490.1,132.4 493.8,134.4 493.0,134.7 490.7,133.2 488.9,133.2 488.1,131.6 488.1,129.4ZM490.7,143.8 493.0,141.3 495.9,139.6 497.6,142.2 497.2,144.5 496.1,145.6 493.8,144.5 492.7,143.0ZM490.7,136.3 494.6,135.4 496.2,137.6 495.3,139.1 493.0,140.4 491.5,139.4 490.7,138.3ZM483.5,141.4 486.9,137.1 487.2,138.0 484.3,141.8ZM470.8,152.2 471.6,151.4 473.9,152.1 474.4,150.2 477.0,149.6 478.5,147.5 480.8,146.1 482.8,143.8 484.1,144.8 486.4,146.4 484.6,147.9 484.1,149.9 484.6,151.4 486.1,153.0 484.3,153.3 483.8,155.7 482.3,156.8 482.3,159.1 481.5,160.6 479.4,160.8 479.2,159.7 477.0,159.4 475.1,159.9 472.7,158.9 472.4,156.8 471.1,155.3 470.8,154.0ZM449.9,145.9 453.2,146.5 455.1,148.7 457.5,150.7 459.4,151.7 462.1,153.7 462.9,156.0 463.9,157.3 466.2,159.1 466.1,163.4 464.1,163.5 463.2,162.2 460.6,160.6 458.6,158.5 457.5,156.0 455.5,153.7 454.8,151.7 452.8,149.6 450.2,147.1ZM465.0,164.9 466.2,163.5 469.3,164.2 470.5,164.9 473.1,165.1 473.9,164.3 476.6,165.1 479.2,166.3 479.1,167.9 475.4,167.2 471.6,166.5 469.3,166.5 466.9,165.9ZM480.0,167.1 482.6,167.2 486.1,167.2 486.1,168.0 483.1,168.3 480.3,168.0ZM487.4,167.4 492.3,167.1 492.0,168.0 487.7,168.2ZM486.1,169.1 488.9,169.7 487.7,170.4ZM493.0,170.4 495.3,168.6 498.7,167.4 496.9,168.6 494.2,170.2ZM487.4,153.4 488.9,152.5 492.3,153.0 495.6,152.1 494.6,153.7 492.3,153.7 489.2,153.7 488.0,154.5 487.8,155.7 490.0,156.0 492.7,155.7 490.7,157.3 490.4,158.5 492.0,160.0 492.3,161.9 490.7,161.9 490.0,160.6 489.2,158.6 488.1,158.9 488.3,161.9 488.1,162.9 486.9,162.9 486.9,159.9 485.8,158.8 486.6,156.5 487.4,154.7ZM499.1,151.4 500.7,152.2 499.9,153.7 500.7,155.3 499.6,154.5 499.1,153.0ZM499.9,159.1 503.7,159.1 504.2,160.0 500.7,159.9ZM504.5,155.7 506.8,155.1 509.1,155.7 510.6,159.6 514.5,156.9 519.8,158.5 525.2,160.3 527.5,162.2 530.2,163.7 529.0,164.9 531.3,168.0 534.3,170.4 532.1,170.2 529.8,169.9 527.5,167.6 525.2,166.3 523.2,167.6 522.9,168.6 519.8,168.5 517.5,166.9 515.2,167.4 516.4,165.2 515.2,162.9 511.4,161.2 507.6,160.6 507.1,158.9 508.8,158.2 506.0,157.7 504.5,156.6ZM531.3,162.9 534.3,162.9 537.0,160.9 537.1,162.2 534.3,164.0 532.1,164.0ZM426.1,139.7 426.8,139.4 429.2,143.0 428.3,145.0 426.8,145.5 426.0,143.0ZM478.6,188.7 479.4,189.9 478.0,191.5 477.7,194.0 478.5,197.4 480.0,202.7 481.1,206.2 480.0,210.3 482.3,211.8 484.6,211.8 487.7,209.9 493.0,209.7 496.9,206.8 501.4,205.5 504.5,205.3 508.3,206.6 510.6,209.9 511.8,211.4 514.5,208.1 514.9,207.3 514.5,209.9 513.7,212.1 515.2,210.4 516.0,211.8 515.2,213.1 517.5,213.6 519.0,217.5 523.6,219.0 525.9,217.5 528.1,219.6 530.5,217.3 533.6,216.3 534.0,213.6 535.4,209.7 537.4,206.2 538.2,202.7 539.1,200.0 538.5,194.9 536.6,193.2 534.8,190.7 532.5,187.4 529.0,184.6 527.5,181.7 526.4,177.7 524.4,176.6 523.6,174.3 522.1,171.0 520.9,173.8 520.6,177.7 519.5,181.7 517.5,181.7 514.9,179.3 511.4,177.7 512.2,174.9 513.4,173.3 510.6,173.2 507.6,172.4 504.5,173.3 502.2,177.4 499.9,177.7 498.1,176.1 495.3,178.5 493.8,180.0 493.2,181.4 491.0,182.2 490.7,183.8 489.2,185.1 486.1,185.8 482.8,186.7 480.0,188.2ZM525.5,222.8 528.2,223.6 531.0,223.2 530.8,225.9 529.8,228.0 527.8,228.8 526.4,226.5ZM17.3,210.6 19.8,212.9 21.6,214.8 22.7,216.7 25.4,216.7 26.2,216.9 25.1,219.8 23.9,220.4 23.6,222.4 21.3,224.6 20.5,224.0 20.8,222.0 19.3,220.4 20.2,218.4 20.4,216.1 19.8,214.6 17.8,212.1ZM568.3,210.6 570.8,212.9 572.6,214.8 573.7,216.7 576.4,216.7 577.2,216.9 576.1,219.8 574.9,220.4 574.6,222.4 572.3,224.6 571.5,224.0 571.8,222.0 570.3,220.4 571.2,218.4 571.4,216.1 570.8,214.6 568.8,212.1ZM17.3,222.4 19.6,223.8 19.3,225.5 17.5,228.2 17.8,229.2 15.0,230.7 14.3,233.8 12.4,235.3 10.6,235.3 7.8,233.8 10.1,230.1 14.0,227.5 15.5,225.0 16.6,223.0ZM568.3,222.4 570.6,223.8 570.3,225.5 568.5,228.2 568.8,229.2 566.0,230.7 565.3,233.8 563.4,235.3 561.6,235.3 558.8,233.8 561.1,230.1 565.0,227.5 566.5,225.0 567.6,223.0ZM173.9,120.1 177.0,118.3 180.0,118.0 183.1,119.1 186.1,120.6 189.2,122.1 190.4,122.9 188.4,123.4 185.1,123.4 184.6,122.1 182.3,120.6 179.3,119.6 177.3,119.1 175.4,120.0ZM190.1,125.8 191.8,123.4 194.3,123.4 196.9,123.7 199.3,125.5 198.4,125.8 196.1,126.2 194.7,127.0 193.0,126.2ZM184.2,125.8 187.2,126.2 186.9,126.6 184.6,126.8ZM201.1,125.7 203.6,126.0 203.3,126.5 201.1,126.5ZM213.2,71.4 215.2,67.1 217.1,62.7 218.9,62.2 218.6,65.9 221.3,67.1 222.9,69.4 223.3,71.7 222.1,73.5 219.8,73.0 218.3,71.4 216.0,71.4ZM107.6,63.9 111.9,65.4 115.0,69.4 113.1,69.2 110.4,67.1ZM100.4,55.4 102.3,55.9 103.2,60.5 101.5,58.5ZM67.5,47.0 70.6,45.0 70.6,47.0 68.3,48.4ZM618.5,47.0 621.6,45.0 621.6,47.0 619.3,48.4ZM209.9,16.8 206.0,27.7 204.5,31.7 199.9,31.1 193.8,25.9 190.7,24.2 184.6,24.2 185.4,20.6 191.5,18.7 192.3,10.9 186.1,3.2 183.1,0.0 173.9,2.3 167.8,-2.3 166.2,-12.2 173.9,-15.9 181.6,-15.9 189.2,-9.6 196.9,-2.3 199.9,2.3 201.5,6.7 207.6,12.9ZM170.8,21.7 174.7,19.5 180.0,25.9 177.0,27.3 173.1,28.7 170.8,27.0ZM121.9,-4.7 124.9,2.8 129.5,8.8 138.7,8.0 143.3,6.7 147.9,6.7 149.4,2.3 144.8,-2.3 143.3,-12.2 129.5,-12.2 121.9,-4.7ZM152.5,4.5 157.1,3.2 157.8,7.5 154.0,8.4ZM205.6,73.2 209.1,74.1 208.3,75.0 206.0,74.6ZM205.3,66.1 209.1,67.3 209.4,68.0 206.0,66.8ZM210.6,246.8 215.2,246.3 215.2,248.5 211.4,248.7ZM65.2,122.9 66.8,123.7 65.7,125.0 65.1,123.9ZM616.2,122.9 617.8,123.7 616.7,125.0 616.1,123.9ZM307.7,88.4 309.2,87.8 308.9,89.0 308.0,88.8ZM331.9,47.8 333.1,45.2 332.9,47.0ZM320.8,51.4 322.8,50.3 323.3,51.9 322.4,53.5 321.1,52.7ZM41.2,27.0 45.3,28.4 45.6,29.4 41.5,28.4ZM592.2,27.0 596.3,28.4 596.6,29.4 592.5,28.4ZM47.9,38.4 50.4,38.1 50.2,39.6 48.1,39.6ZM598.9,38.4 601.4,38.1 601.2,39.6 599.1,39.6ZM526.7,78.7 531.7,76.1 531.4,76.8 527.2,79.6ZM385.6,134.9 387.4,135.1 387.1,135.5 385.7,135.4ZM4.0,185.9 8.6,189.4 7.8,189.7 3.7,186.6ZM555.0,185.9 559.6,189.4 558.8,189.7 554.7,186.6ZM24.4,181.7 26.4,181.7 26.2,182.8 24.4,182.7ZM575.4,181.7 577.4,181.7 577.2,182.8 575.4,182.7ZM209.3,137.9 210.8,137.9 210.6,139.0 209.3,139.0Z"/></clipPath>
<filter id="b3" x="-20%" y="-20%" width="140%" height="140%"><feGaussianBlur stdDeviation="3"/></filter>
<filter id="b2" x="-20%" y="-20%" width="140%" height="140%"><feGaussianBlur stdDeviation="1.6"/></filter></defs>
<rect width="625.5" height="269" fill="#aadaff"/>
<path d="M46.9,20.2 52.2,16.8 56.1,18.3 56.8,14.9 53.0,12.1 49.2,9.2 54.5,4.5 56.2,1.0 64.5,-3.7 71.4,-1.3 77.5,0.5 85.1,1.9 88.2,4.1 95.8,6.7 100.4,4.5 106.6,2.3 109.6,1.0 108.1,0.0 112.7,3.2 118.8,3.2 124.9,6.7 128.0,8.8 129.5,11.7 135.6,11.3 138.7,12.9 138.7,9.6 143.3,8.8 149.4,11.7 154.0,10.9 157.1,9.6 157.1,2.3 159.4,-7.1 163.2,0.0 164.0,4.5 166.2,8.8 169.3,12.9 170.8,13.7 173.1,3.2 178.5,3.6 179.6,8.8 177.7,16.8 172.4,16.8 170.8,20.6 170.1,24.2 166.2,26.6 164.7,27.7 161.7,32.7 159.4,37.5 159.8,42.6 162.4,47.8 166.2,47.8 169.3,49.2 173.9,52.5 178.0,52.7 178.2,58.5 180.0,61.7 182.3,62.7 183.4,59.8 183.1,54.6 186.1,50.6 186.9,46.4 183.9,42.6 184.6,37.5 185.4,31.1 190.7,31.7 194.6,35.3 197.2,36.2 197.6,42.0 199.9,44.1 203.0,42.6 204.5,38.1 205.3,38.1 209.1,45.0 209.9,49.2 212.9,52.7 216.0,55.9 218.3,59.8 218.7,61.5 216.8,62.5 213.7,65.2 209.1,65.2 203.0,65.4 200.7,67.5 197.6,70.5 196.1,72.8 198.4,71.0 202.2,68.0 205.6,68.7 204.5,70.5 204.8,72.8 206.0,74.6 209.9,75.5 212.2,74.4 210.6,76.6 206.8,78.1 203.7,80.4 202.7,78.3 205.3,76.1 201.5,77.2 198.4,78.9 196.4,80.2 195.8,82.1 196.9,84.0 194.6,84.8 190.7,86.2 190.7,88.6 188.9,90.0 188.0,93.1 187.7,93.7 188.3,96.7 186.1,98.0 184.6,99.3 182.3,100.9 180.0,102.8 179.4,105.4 180.8,109.3 181.6,111.9 181.2,114.5 179.7,114.6 178.8,112.8 177.3,110.2 177.4,108.1 175.4,106.3 173.1,106.7 170.1,105.8 167.8,105.8 167.3,107.7 164.7,107.6 160.4,106.9 158.6,107.9 155.2,110.3 155.1,113.3 154.3,119.1 155.2,121.9 156.8,124.5 159.2,126.2 163.2,125.5 165.2,124.4 165.6,121.6 169.3,120.6 171.1,121.1 170.1,124.1 169.3,126.0 168.9,128.9 168.1,129.8 172.4,129.8 176.4,131.0 176.2,134.4 175.9,137.6 177.3,139.7 179.3,140.8 181.7,140.2 183.9,140.0 185.7,141.3 185.4,143.0 184.3,143.0 183.9,141.6 182.3,140.8 181.1,141.9 180.9,143.3 179.3,142.7 177.3,141.9 176.0,141.4 174.2,139.6 172.7,138.6 172.8,137.4 170.2,134.7 169.6,134.0 167.0,133.6 164.0,132.9 160.9,130.3 158.9,129.4 156.3,130.2 152.5,128.7 148.6,127.3 145.6,126.0 142.5,123.6 142.8,120.8 141.0,117.8 137.9,114.5 136.6,112.1 134.7,110.0 132.3,108.1 131.0,104.2 128.3,103.3 128.4,106.0 130.7,108.4 132.6,111.6 134.1,114.1 135.2,116.3 136.4,118.0 135.6,118.5 132.6,115.8 132.3,113.3 129.2,111.2 128.3,110.2 129.5,109.0 126.9,106.0 124.8,101.9 122.8,99.1 119.4,98.2 117.4,94.2 116.5,91.9 114.5,88.6 113.8,86.8 114.1,81.5 114.2,74.6 113.1,69.6 115.7,70.5 116.5,72.1 116.0,68.2 113.4,65.9 109.6,63.9 108.9,61.0 106.6,57.2 104.6,54.1 102.7,50.6 99.7,46.4 96.6,43.5 94.3,43.5 90.5,39.9 83.6,39.0 79.8,36.5 76.7,39.0 74.4,40.5 71.7,41.4 72.1,37.5 74.4,35.3 71.4,36.5 69.1,40.5 68.0,43.5 64.5,47.2 61.4,50.6 57.6,52.7 54.5,53.8 51.8,54.3 55.3,51.4 58.3,50.0 61.4,47.2 62.9,43.5 61.4,42.6 58.3,42.9 56.1,42.0 56.1,39.0 52.2,37.5 50.7,34.3 49.9,32.7 51.8,29.4 56.1,27.7 57.6,24.5 54.5,24.2 50.7,24.2ZM597.9,20.2 603.2,16.8 607.0,18.3 607.8,14.9 604.0,12.1 600.2,9.2 605.5,4.5 607.2,1.0 615.5,-3.7 622.4,-1.3 628.5,0.5 636.1,1.9 639.2,4.1 646.8,6.7 651.4,4.5 657.6,2.3 660.6,1.0 659.1,0.0 663.7,3.2 669.8,3.2 675.9,6.7 679.0,8.8 680.5,11.7 686.6,11.3 689.7,12.9 689.7,9.6 694.3,8.8 700.4,11.7 705.0,10.9 708.1,9.6 708.1,2.3 710.4,-7.1 714.2,0.0 715.0,4.5 717.2,8.8 720.3,12.9 721.8,13.7 724.1,3.2 729.5,3.6 730.6,8.8 728.7,16.8 723.4,16.8 721.8,20.6 721.1,24.2 717.2,26.6 715.7,27.7 712.7,32.7 710.4,37.5 710.8,42.6 713.4,47.8 717.2,47.8 720.3,49.2 724.9,52.5 729.0,52.7 729.2,58.5 731.0,61.7 733.3,62.7 734.4,59.8 734.1,54.6 737.1,50.6 737.9,46.4 734.9,42.6 735.6,37.5 736.4,31.1 741.7,31.7 745.6,35.3 748.2,36.2 748.6,42.0 750.9,44.1 754.0,42.6 755.5,38.1 756.3,38.1 760.1,45.0 760.9,49.2 763.9,52.7 767.0,55.9 769.3,59.8 769.7,61.5 767.8,62.5 764.7,65.2 760.1,65.2 754.0,65.4 751.7,67.5 748.6,70.5 747.1,72.8 749.4,71.0 753.2,68.0 756.6,68.7 755.5,70.5 755.8,72.8 757.0,74.6 760.9,75.5 763.2,74.4 761.6,76.6 757.8,78.1 754.7,80.4 753.7,78.3 756.3,76.1 752.5,77.2 749.4,78.9 747.4,80.2 746.8,82.1 747.9,84.0 745.6,84.8 741.7,86.2 741.7,88.6 739.9,90.0 739.0,93.1 738.7,93.7 739.3,96.7 737.1,98.0 735.6,99.3 733.3,100.9 731.0,102.8 730.4,105.4 731.8,109.3 732.6,111.9 732.2,114.5 730.7,114.6 729.8,112.8 728.3,110.2 728.4,108.1 726.4,106.3 724.1,106.7 721.1,105.8 718.8,105.8 718.3,107.7 715.7,107.6 711.4,106.9 709.6,107.9 706.2,110.3 706.1,113.3 705.3,119.1 706.2,121.9 707.8,124.5 710.2,126.2 714.2,125.5 716.2,124.4 716.6,121.6 720.3,120.6 722.1,121.1 721.1,124.1 720.3,126.0 719.9,128.9 719.1,129.8 723.4,129.8 727.4,131.0 727.2,134.4 726.9,137.6 728.3,139.7 730.3,140.8 732.7,140.2 734.9,140.0 736.7,141.3 736.4,143.0 735.3,143.0 734.9,141.6 733.3,140.8 732.1,141.9 731.9,143.3 730.3,142.7 728.3,141.9 727.0,141.4 725.2,139.6 723.7,138.6 723.8,137.4 721.2,134.7 720.6,134.0 718.0,133.6 715.0,132.9 711.9,130.3 709.9,129.4 707.3,130.2 703.5,128.7 699.6,127.3 696.6,126.0 693.5,123.6 693.8,120.8 692.0,117.8 688.9,114.5 687.6,112.1 685.7,110.0 683.3,108.1 682.0,104.2 679.3,103.3 679.4,106.0 681.7,108.4 683.6,111.6 685.1,114.1 686.2,116.3 687.4,118.0 686.6,118.5 683.6,115.8 683.3,113.3 680.2,111.2 679.3,110.2 680.5,109.0 677.9,106.0 675.8,101.9 673.8,99.1 670.4,98.2 668.4,94.2 667.5,91.9 665.5,88.6 664.8,86.8 665.1,81.5 665.2,74.6 664.1,69.6 666.7,70.5 667.5,72.1 667.0,68.2 664.4,65.9 660.6,63.9 659.9,61.0 657.6,57.2 655.6,54.1 653.7,50.6 650.7,46.4 647.6,43.5 645.3,43.5 641.5,39.9 634.6,39.0 630.8,36.5 627.7,39.0 625.4,40.5 622.7,41.4 623.1,37.5 625.4,35.3 622.4,36.5 620.1,40.5 619.0,43.5 615.5,47.2 612.4,50.6 608.6,52.7 605.5,53.8 602.8,54.3 606.3,51.4 609.3,50.0 612.4,47.2 613.9,43.5 612.4,42.6 609.3,42.9 607.0,42.0 607.0,39.0 603.2,37.5 601.7,34.3 600.9,32.7 602.8,29.4 607.0,27.7 608.6,24.5 605.5,24.2 601.7,24.2ZM220.6,0.0 225.9,4.5 222.1,8.8 222.1,14.9 224.4,22.4 225.2,25.9 227.5,31.1 229.8,35.9 233.6,37.5 236.7,39.3 238.2,38.1 239.0,32.7 242.0,25.9 242.8,22.4 247.4,19.5 252.0,16.8 255.0,10.9 261.1,8.8 265.7,4.5 269.6,1.4 270.3,-7.1 273.4,-23.3 219.8,-23.3 220.6,-7.1ZM266.5,20.6 270.3,17.2 276.4,17.9 279.5,16.8 281.8,17.9 283.3,22.4 281.0,24.9 276.4,27.7 272.6,27.7 269.3,26.6 270.3,24.2 267.3,22.8ZM185.7,141.3 186.5,142.2 188.3,139.9 188.4,138.3 189.5,137.4 192.3,136.9 194.3,135.4 194.9,137.6 194.1,139.1 195.3,139.9 196.9,136.8 196.9,135.7 199.2,138.0 203.0,138.2 205.3,138.8 209.1,138.0 209.4,139.4 210.9,141.4 213.7,142.5 216.0,144.8 219.8,145.5 224.4,147.1 225.9,148.4 227.5,151.7 226.7,154.5 229.8,155.6 231.3,155.4 235.9,157.6 240.5,158.9 242.8,158.8 245.1,160.2 247.4,162.0 250.1,162.9 250.7,165.5 250.4,168.3 247.4,171.4 245.1,174.6 244.3,178.5 244.0,182.2 242.8,185.8 241.2,189.0 237.9,190.7 235.1,192.0 233.1,192.4 229.8,195.4 229.6,199.2 227.5,201.8 224.4,206.2 222.1,209.9 219.8,211.6 216.8,210.8 214.6,210.3 216.5,212.7 217.2,214.6 215.8,217.5 212.2,219.2 208.8,219.4 208.8,223.0 204.5,223.4 204.5,226.5 206.7,226.5 204.2,228.6 203.7,231.8 200.7,234.0 203.0,237.3 200.7,241.9 198.4,244.3 199.2,248.7 199.2,250.5 200.7,253.1 204.2,254.9 202.2,256.3 199.2,257.1 196.9,256.3 193.8,253.9 190.7,249.2 189.2,244.3 188.4,239.6 188.3,235.5 190.7,231.8 191.5,225.5 190.7,223.4 191.5,220.4 191.5,215.9 192.7,212.7 194.4,208.1 194.6,202.7 195.3,198.3 196.1,194.0 196.6,189.0 196.4,183.2 194.6,181.4 191.5,179.8 188.9,178.2 187.2,175.8 185.8,173.0 183.9,169.1 182.0,165.2 179.7,163.7 179.6,161.4 181.1,159.7 181.7,158.3 180.0,157.9 180.3,156.0 181.6,154.0 183.1,152.2 183.9,150.7 185.4,148.7 185.4,146.1 185.4,143.8 184.3,143.0ZM295.0,95.7 295.9,95.6 299.4,96.7 300.9,97.1 304.0,95.7 305.5,94.4 308.6,93.8 312.4,93.8 315.5,93.5 319.0,92.9 320.8,93.5 320.2,94.6 320.7,96.3 319.6,98.6 320.8,99.8 323.1,101.1 324.2,101.1 327.4,102.2 328.2,103.8 331.6,105.4 333.8,105.8 334.6,104.6 334.6,102.4 336.9,101.1 339.5,101.9 342.3,103.1 345.3,104.0 348.4,104.7 349.9,104.0 351.4,103.5 353.4,104.0 356.3,104.0 357.4,107.2 356.5,110.2 355.3,109.0 353.9,106.5 353.9,108.1 355.3,110.2 356.0,111.9 357.6,115.0 358.5,116.8 360.6,120.0 360.9,121.6 361.2,124.9 362.9,126.5 364.5,130.5 366.8,132.1 369.0,134.4 370.3,135.2 370.1,136.6 371.3,138.3 374.4,137.9 377.5,137.2 382.4,136.2 382.1,138.5 380.5,142.2 379.0,145.3 377.5,147.6 374.4,150.7 373.3,151.4 370.6,153.7 368.3,156.0 366.8,157.6 365.5,159.1 364.8,160.6 363.7,163.7 364.5,165.2 364.5,167.6 364.9,169.9 366.0,170.7 366.1,173.8 366.4,176.9 365.2,179.6 362.2,181.4 360.5,182.5 357.6,185.4 358.3,189.0 358.3,192.4 354.5,194.9 354.2,197.4 353.6,200.0 351.4,202.5 348.4,206.2 346.7,208.1 343.3,209.9 339.2,210.1 334.6,211.4 332.3,210.4 332.0,207.7 332.0,205.3 330.5,202.7 329.3,200.2 327.3,196.9 326.2,190.7 324.2,185.8 322.1,182.5 322.1,179.3 322.8,176.1 324.5,173.5 325.1,171.4 324.2,168.0 322.8,163.7 322.4,162.2 320.8,160.2 318.5,157.6 317.5,155.6 318.5,153.7 318.7,151.4 319.0,149.1 317.8,147.6 316.2,147.6 313.9,147.9 312.4,146.8 310.9,144.8 309.2,144.7 306.3,145.0 304.0,145.8 300.9,147.1 297.9,146.4 294.8,147.1 292.5,147.8 289.5,146.1 286.4,143.9 283.8,141.4 282.6,139.1 281.0,137.6 278.4,135.5 278.3,133.6 277.2,131.7 278.7,129.7 279.1,126.5 279.2,124.1 278.0,121.6 279.5,117.5 281.3,114.1 284.1,110.3 287.2,108.4 289.0,106.7 289.0,103.7 291.0,100.4 293.6,99.1ZM379.5,173.0 381.3,178.2 380.2,180.1 379.8,182.5 377.5,189.9 375.9,194.0 373.2,194.9 370.9,192.4 370.3,189.0 371.8,185.8 371.3,180.9 372.9,179.3 375.9,177.7 377.5,175.4ZM-260.8,93.5 -261.5,90.2 -260.5,86.6 -260.5,83.5 -261.2,81.5 -259.2,80.0 -255.4,80.4 -252.4,80.6 -249.8,80.6 -248.8,78.3 -248.7,75.5 -250.4,72.8 -251.6,71.4 -253.9,70.8 -254.3,69.6 -251.6,68.7 -249.4,69.2 -249.8,66.6 -248.8,67.3 -246.8,67.1 -244.7,65.6 -244.6,63.7 -241.6,62.5 -240.6,60.5 -239.7,58.5 -237.8,57.5 -236.3,57.2 -234.4,57.0 -233.5,55.9 -233.8,53.3 -234.6,51.7 -234.4,47.8 -232.5,47.2 -230.8,45.8 -231.2,49.2 -230.5,50.0 -231.7,51.9 -232.0,53.8 -230.5,55.9 -228.6,55.4 -226.3,54.9 -225.3,56.2 -221.7,54.6 -218.7,54.1 -217.2,54.9 -216.4,53.5 -214.9,52.5 -214.9,48.4 -214.1,46.4 -212.6,45.8 -210.3,47.5 -209.8,45.5 -211.0,42.9 -211.0,41.4 -208.7,40.5 -204.1,40.5 -201.1,39.3 -203.4,37.5 -207.2,37.8 -211.8,39.3 -214.1,37.5 -214.4,34.3 -214.4,29.4 -212.6,26.6 -209.5,23.1 -208.3,20.6 -210.3,19.5 -213.3,20.2 -214.4,24.2 -215.6,27.0 -218.7,29.4 -220.7,33.7 -220.7,36.8 -218.4,38.7 -219.4,41.1 -221.4,43.5 -221.7,46.4 -222.5,50.0 -225.1,50.6 -225.3,52.2 -227.1,52.2 -227.9,49.8 -228.9,45.8 -229.9,42.0 -230.8,39.6 -231.7,42.0 -234.0,44.4 -236.3,45.0 -238.4,42.6 -239.0,38.4 -239.3,34.3 -239.0,32.0 -236.3,29.7 -233.5,27.7 -230.9,24.9 -227.9,19.5 -226.8,15.6 -224.8,11.7 -222.5,8.4 -220.2,5.4 -217.9,3.2 -214.1,1.4 -211.8,0.0 -207.7,-2.7 -204.1,-1.3 -199.6,1.0 -201.1,3.6 -196.5,5.0 -191.9,5.8 -185.0,11.7 -183.9,15.6 -185.8,17.9 -188.8,18.3 -193.4,16.8 -196.5,16.0 -194.2,20.6 -193.7,24.2 -190.4,26.3 -188.8,24.5 -185.0,23.8 -185.8,20.2 -182.7,17.2 -179.7,17.9 -179.3,9.6 -180.7,8.4 -176.6,9.6 -175.8,12.1 -173.5,12.1 -165.9,7.5 -164.4,9.6 -159.8,8.4 -155.2,6.7 -154.4,3.2 -149.0,5.4 -146.0,6.7 -144.5,8.8 -142.2,9.6 -144.5,3.2 -144.5,-1.3 -142.9,-12.2 -136.8,-12.2 -135.9,-4.7 -135.4,4.5 -137.3,10.9 -137.7,15.3 -141.4,16.4 -145.2,18.3 -145.2,19.8 -140.6,18.7 -136.8,18.7 -134.8,12.9 -133.4,6.7 -134.4,-2.3 -132.8,-9.6 -129.1,-7.1 -123.0,-6.1 -120.0,-2.3 -120.0,-9.6 -124.6,-14.8 -109.2,-29.4 -86.3,-43.1 -74.0,-17.6 -52.6,-12.2 -48.0,-2.3 -43.4,-4.7 -32.7,-9.6 -17.4,-4.7 -2.1,2.3 -0.6,4.5 5.5,4.1 10.1,2.3 14.0,6.7 14.7,2.3 22.4,3.2 28.5,7.1 34.6,12.9 40.7,15.6 44.1,18.7 42.3,20.6 40.0,24.2 38.4,24.5 31.6,20.6 30.0,17.6 27.0,22.4 24.7,23.5 27.7,29.4 27.4,31.1 20.8,34.3 16.3,36.5 13.2,39.0 7.1,39.0 4.0,39.6 2.5,45.0 1.0,46.4 2.5,50.6 1.0,53.8 -2.1,55.9 -4.4,58.5 -7.2,63.5 -8.2,59.8 -8.7,53.3 -9.0,47.8 -6.7,45.0 -2.9,40.5 1.0,37.5 3.2,33.3 4.0,31.1 1.0,34.0 -2.1,33.3 -6.7,33.7 -9.8,40.5 -14.4,42.0 -15.9,40.5 -23.5,41.1 -28.1,41.1 -32.7,46.4 -36.5,51.9 -39.6,54.1 -36.5,55.9 -33.5,55.4 -30.7,58.0 -32.0,63.5 -32.0,68.2 -34.3,71.7 -37.3,76.1 -39.6,79.4 -43.4,81.9 -45.1,81.3 -47.0,82.9 -48.5,85.6 -51.1,87.6 -51.9,89.0 -50.3,90.6 -48.9,93.5 -48.9,96.3 -50.3,97.2 -53.4,98.4 -53.7,96.3 -53.2,93.5 -55.7,91.9 -55.4,89.0 -56.8,87.8 -60.3,89.4 -61.5,90.0 -60.3,86.6 -61.8,85.8 -64.9,89.2 -66.9,89.6 -65.6,91.9 -64.6,93.1 -61.8,92.3 -59.4,93.1 -61.8,94.4 -64.1,96.7 -63.3,98.7 -62.1,101.3 -60.4,103.3 -61.0,104.9 -60.3,106.7 -61.0,109.3 -63.3,111.9 -64.4,114.1 -66.4,115.8 -68.7,118.0 -72.2,119.5 -75.6,120.5 -77.9,121.3 -78.3,122.8 -79.1,120.8 -81.2,120.6 -83.7,121.9 -85.1,124.9 -84.0,127.0 -81.4,129.5 -79.9,133.6 -79.9,136.3 -82.5,138.5 -83.5,138.6 -86.3,141.1 -86.6,139.1 -88.6,138.2 -90.1,136.0 -92.4,134.9 -93.0,133.6 -93.9,135.2 -95.0,138.3 -94.3,140.2 -93.2,143.3 -91.6,144.1 -89.4,146.1 -88.6,148.4 -88.6,150.7 -87.5,152.4 -88.7,152.4 -91.6,150.4 -93.2,148.4 -93.5,145.3 -94.7,143.8 -96.5,142.2 -96.2,139.1 -95.9,136.0 -97.0,132.9 -97.5,129.7 -98.5,128.4 -100.8,130.0 -102.7,129.7 -102.4,126.5 -103.6,123.6 -106.2,120.8 -107.0,119.0 -108.5,119.6 -110.8,120.3 -113.8,120.8 -114.1,122.4 -116.1,123.7 -118.4,126.0 -121.0,128.6 -124.1,130.5 -124.2,134.1 -124.9,136.8 -124.9,138.6 -126.1,140.2 -127.6,141.6 -128.4,142.1 -129.9,139.9 -131.4,136.3 -132.5,134.4 -133.7,130.8 -135.3,127.3 -135.6,124.9 -135.6,121.6 -136.0,120.0 -136.8,121.6 -139.1,121.9 -141.4,119.6 -139.9,118.3 -142.2,117.5 -144.5,115.3 -149.0,114.5 -152.9,114.8 -156.7,114.3 -159.5,113.6 -160.1,111.6 -162.8,112.1 -165.9,111.6 -168.9,109.0 -169.7,106.7 -172.0,105.6 -173.5,106.3 -173.1,108.1 -172.3,110.2 -170.5,112.1 -170.2,113.6 -168.2,113.3 -168.2,115.6 -166.6,116.3 -163.9,116.1 -161.3,113.3 -160.5,115.8 -157.5,117.3 -155.5,119.1 -157.5,122.4 -158.7,124.9 -161.3,126.6 -163.6,128.1 -167.1,129.7 -172.0,132.4 -175.1,133.6 -178.1,134.7 -180.4,134.9 -180.9,133.6 -181.5,131.3 -182.0,128.9 -184.2,125.2 -187.0,120.8 -188.1,117.5 -190.1,115.0 -192.7,110.7 -193.4,109.5 -193.4,107.2 -194.2,109.3 -194.5,110.2 -195.7,109.0 -197.1,106.5 -197.4,104.2 -194.5,104.0 -193.6,101.9 -192.5,99.1 -191.9,95.7 -191.6,94.2 -194.2,94.0 -196.5,95.2 -200.2,93.8 -202.6,94.6 -204.9,93.8 -205.2,91.9 -206.4,90.6 -206.0,88.6 -206.9,87.6 -204.9,86.8 -202.6,86.6 -202.3,85.2 -198.8,85.0 -195.7,83.5 -193.1,83.5 -191.1,85.0 -188.8,85.6 -185.8,85.6 -183.3,84.4 -183.5,82.1 -186.5,80.0 -188.8,78.1 -189.9,76.6 -188.1,74.6 -186.8,72.4 -189.6,72.8 -193.1,74.4 -193.4,75.7 -191.1,76.6 -192.7,77.2 -195.0,78.5 -195.7,78.1 -197.1,76.3 -195.4,74.8 -198.3,73.7 -200.0,74.1 -201.5,76.6 -203.1,78.9 -204.1,81.0 -204.5,83.1 -204.0,84.4 -202.6,85.2 -204.1,85.6 -205.7,86.2 -206.9,87.0 -207.2,86.0 -209.5,85.8 -210.7,87.2 -212.0,86.6 -212.3,88.6 -211.3,90.0 -210.3,91.1 -210.3,92.1 -211.8,91.7 -211.5,92.9 -212.1,94.4 -212.7,94.6 -213.8,93.8 -214.6,91.9 -214.4,91.0 -215.3,89.8 -216.4,88.2 -217.3,86.6 -217.2,84.6 -217.9,83.1 -220.2,81.5 -222.5,80.2 -224.0,78.5 -224.8,76.8 -226.0,77.0 -226.0,75.7 -228.0,76.3 -228.2,78.3 -226.2,80.4 -225.3,82.7 -222.5,83.7 -222.5,84.8 -220.2,86.0 -218.7,87.2 -218.8,88.0 -221.0,86.6 -221.6,88.2 -220.8,89.6 -221.7,90.8 -223.0,91.7 -222.8,90.4 -222.5,88.6 -223.3,87.4 -224.8,86.2 -227.1,85.0 -228.3,84.0 -230.2,82.5 -231.2,80.4 -232.0,79.1 -233.4,78.5 -235.5,79.8 -237.1,81.0 -238.9,80.8 -240.9,80.4 -242.1,81.5 -242.1,82.9 -241.9,84.0 -243.6,84.8 -245.8,86.0 -247.5,88.6 -246.7,90.0 -248.1,92.1 -250.1,93.8 -253.7,94.0 -255.3,95.2 -256.6,94.2 -257.4,93.3 -259.2,93.5ZM290.2,93.5 289.5,90.2 290.5,86.6 290.5,83.5 289.8,81.5 291.8,80.0 295.6,80.4 298.6,80.6 301.2,80.6 302.2,78.3 302.3,75.5 300.6,72.8 299.4,71.4 297.1,70.8 296.7,69.6 299.4,68.7 301.6,69.2 301.2,66.6 302.2,67.3 304.2,67.1 306.3,65.6 306.4,63.7 309.4,62.5 310.4,60.5 311.3,58.5 313.2,57.5 314.7,57.2 316.6,57.0 317.5,55.9 317.2,53.3 316.4,51.7 316.6,47.8 318.5,47.2 320.2,45.8 319.8,49.2 320.5,50.0 319.3,51.9 319.0,53.8 320.5,55.9 322.4,55.4 324.7,54.9 325.7,56.2 329.3,54.6 332.3,54.1 333.8,54.9 334.6,53.5 336.1,52.5 336.1,48.4 336.9,46.4 338.4,45.8 340.7,47.5 341.2,45.5 340.0,42.9 340.0,41.4 342.3,40.5 346.9,40.5 349.9,39.3 347.6,37.5 343.8,37.8 339.2,39.3 336.9,37.5 336.6,34.3 336.6,29.4 338.4,26.6 341.5,23.1 342.7,20.6 340.7,19.5 337.7,20.2 336.6,24.2 335.4,27.0 332.3,29.4 330.3,33.7 330.3,36.8 332.6,38.7 331.6,41.1 329.6,43.5 329.3,46.4 328.5,50.0 325.9,50.6 325.7,52.2 323.9,52.2 323.1,49.8 322.1,45.8 321.1,42.0 320.2,39.6 319.3,42.0 317.0,44.4 314.7,45.0 312.6,42.6 312.0,38.4 311.7,34.3 312.0,32.0 314.7,29.7 317.5,27.7 320.1,24.9 323.1,19.5 324.2,15.6 326.2,11.7 328.5,8.4 330.8,5.4 333.1,3.2 336.9,1.4 339.2,0.0 343.3,-2.7 346.9,-1.3 351.4,1.0 349.9,3.6 354.5,5.0 359.1,5.8 366.0,11.7 367.1,15.6 365.2,17.9 362.2,18.3 357.6,16.8 354.5,16.0 356.8,20.6 357.3,24.2 360.6,26.3 362.2,24.5 366.0,23.8 365.2,20.2 368.3,17.2 371.3,17.9 371.7,9.6 370.3,8.4 374.4,9.6 375.2,12.1 377.5,12.1 385.1,7.5 386.6,9.6 391.2,8.4 395.8,6.7 396.6,3.2 402.0,5.4 405.0,6.7 406.5,8.8 408.8,9.6 406.5,3.2 406.5,-1.3 408.1,-12.2 414.2,-12.2 415.1,-4.7 415.6,4.5 413.7,10.9 413.3,15.3 409.6,16.4 405.8,18.3 405.8,19.8 410.4,18.7 414.2,18.7 416.2,12.9 417.6,6.7 416.6,-2.3 418.2,-9.6 421.9,-7.1 428.0,-6.1 431.0,-2.3 431.0,-9.6 426.4,-14.8 441.8,-29.4 464.7,-43.1 477.0,-17.6 498.4,-12.2 503.0,-2.3 507.6,-4.7 518.3,-9.6 533.6,-4.7 548.9,2.3 550.4,4.5 556.5,4.1 561.1,2.3 565.0,6.7 565.7,2.3 573.4,3.2 579.5,7.1 585.6,12.9 591.7,15.6 595.1,18.7 593.3,20.6 591.0,24.2 589.4,24.5 582.6,20.6 581.0,17.6 578.0,22.4 575.7,23.5 578.7,29.4 578.4,31.1 571.8,34.3 567.3,36.5 564.2,39.0 558.1,39.0 555.0,39.6 553.5,45.0 552.0,46.4 553.5,50.6 552.0,53.8 548.9,55.9 546.6,58.5 543.8,63.5 542.8,59.8 542.3,53.3 542.0,47.8 544.3,45.0 548.1,40.5 552.0,37.5 554.2,33.3 555.0,31.1 552.0,34.0 548.9,33.3 544.3,33.7 541.2,40.5 536.6,42.0 535.1,40.5 527.5,41.1 522.9,41.1 518.3,46.4 514.5,51.9 511.4,54.1 514.5,55.9 517.5,55.4 520.3,58.0 519.0,63.5 519.0,68.2 516.7,71.7 513.7,76.1 511.4,79.4 507.6,81.9 505.9,81.3 504.0,82.9 502.5,85.6 499.9,87.6 499.1,89.0 500.7,90.6 502.1,93.5 502.1,96.3 500.7,97.2 497.6,98.4 497.3,96.3 497.8,93.5 495.3,91.9 495.6,89.0 494.2,87.8 490.7,89.4 489.5,90.0 490.7,86.6 489.2,85.8 486.1,89.2 484.1,89.6 485.4,91.9 486.4,93.1 489.2,92.3 491.6,93.1 489.2,94.4 486.9,96.7 487.7,98.7 488.9,101.3 490.6,103.3 490.0,104.9 490.7,106.7 490.0,109.3 487.7,111.9 486.6,114.1 484.6,115.8 482.3,118.0 478.8,119.5 475.4,120.5 473.1,121.3 472.7,122.8 471.9,120.8 469.8,120.6 467.3,121.9 465.9,124.9 467.0,127.0 469.6,129.5 471.1,133.6 471.1,136.3 468.5,138.5 467.5,138.6 464.7,141.1 464.4,139.1 462.4,138.2 460.9,136.0 458.6,134.9 458.0,133.6 457.1,135.2 456.0,138.3 456.7,140.2 457.8,143.3 459.4,144.1 461.6,146.1 462.4,148.4 462.4,150.7 463.5,152.4 462.3,152.4 459.4,150.4 457.8,148.4 457.5,145.3 456.3,143.8 454.5,142.2 454.8,139.1 455.1,136.0 454.0,132.9 453.5,129.7 452.5,128.4 450.2,130.0 448.3,129.7 448.6,126.5 447.4,123.6 444.8,120.8 444.0,119.0 442.5,119.6 440.2,120.3 437.2,120.8 436.9,122.4 434.9,123.7 432.6,126.0 430.0,128.6 426.9,130.5 426.8,134.1 426.1,136.8 426.1,138.6 424.9,140.2 423.4,141.6 422.6,142.1 421.1,139.9 419.6,136.3 418.5,134.4 417.3,130.8 415.7,127.3 415.4,124.9 415.4,121.6 415.0,120.0 414.2,121.6 411.9,121.9 409.6,119.6 411.1,118.3 408.8,117.5 406.5,115.3 402.0,114.5 398.1,114.8 394.3,114.3 391.5,113.6 390.9,111.6 388.2,112.1 385.1,111.6 382.1,109.0 381.3,106.7 379.0,105.6 377.5,106.3 377.9,108.1 378.7,110.2 380.5,112.1 380.8,113.6 382.8,113.3 382.8,115.6 384.4,116.3 387.1,116.1 389.7,113.3 390.5,115.8 393.5,117.3 395.5,119.1 393.5,122.4 392.3,124.9 389.7,126.6 387.4,128.1 383.9,129.7 379.0,132.4 375.9,133.6 372.9,134.7 370.6,134.9 370.1,133.6 369.5,131.3 369.0,128.9 366.8,125.2 364.0,120.8 362.9,117.5 360.9,115.0 358.3,110.7 357.6,109.5 357.6,107.2 356.8,109.3 356.5,110.2 355.3,109.0 353.9,106.5 353.6,104.2 356.5,104.0 357.4,101.9 358.5,99.1 359.1,95.7 359.4,94.2 356.8,94.0 354.5,95.2 350.8,93.8 348.4,94.6 346.1,93.8 345.8,91.9 344.6,90.6 345.0,88.6 344.1,87.6 346.1,86.8 348.4,86.6 348.7,85.2 352.2,85.0 355.3,83.5 357.9,83.5 359.9,85.0 362.2,85.6 365.2,85.6 367.7,84.4 367.5,82.1 364.5,80.0 362.2,78.1 361.1,76.6 362.9,74.6 364.2,72.4 361.4,72.8 357.9,74.4 357.6,75.7 359.9,76.6 358.3,77.2 356.0,78.5 355.3,78.1 353.9,76.3 355.6,74.8 352.7,73.7 351.0,74.1 349.5,76.6 347.9,78.9 346.9,81.0 346.5,83.1 347.0,84.4 348.4,85.2 346.9,85.6 345.3,86.2 344.1,87.0 343.8,86.0 341.5,85.8 340.3,87.2 339.0,86.6 338.7,88.6 339.7,90.0 340.7,91.1 340.7,92.1 339.2,91.7 339.5,92.9 338.9,94.4 338.3,94.6 337.2,93.8 336.4,91.9 336.6,91.0 335.7,89.8 334.6,88.2 333.7,86.6 333.8,84.6 333.1,83.1 330.8,81.5 328.5,80.2 327.0,78.5 326.2,76.8 325.0,77.0 325.0,75.7 323.0,76.3 322.8,78.3 324.8,80.4 325.7,82.7 328.5,83.7 328.5,84.8 330.8,86.0 332.3,87.2 332.2,88.0 330.0,86.6 329.4,88.2 330.2,89.6 329.3,90.8 328.0,91.7 328.2,90.4 328.5,88.6 327.7,87.4 326.2,86.2 323.9,85.0 322.7,84.0 320.8,82.5 319.8,80.4 319.0,79.1 317.6,78.5 315.5,79.8 313.9,81.0 312.1,80.8 310.1,80.4 308.9,81.5 308.9,82.9 309.1,84.0 307.4,84.8 305.2,86.0 303.5,88.6 304.3,90.0 302.9,92.1 300.9,93.8 297.3,94.0 295.7,95.2 294.4,94.2 293.6,93.3 291.8,93.5ZM295.3,65.6 298.6,65.2 302.5,64.2 306.1,63.0 305.2,62.2 306.6,59.5 304.5,58.5 304.0,57.0 303.7,55.1 301.7,53.3 300.9,51.1 299.4,50.6 300.9,46.4 298.6,45.8 299.4,43.2 296.3,43.2 295.1,46.4 295.6,49.8 296.3,51.9 296.7,53.8 298.6,53.8 299.4,56.4 299.3,57.7 297.1,57.7 297.6,59.8 296.0,61.5 299.1,62.5 297.4,63.2ZM294.8,60.5 294.5,57.2 295.6,54.6 294.1,52.7 291.4,52.7 288.7,55.4 289.0,57.7 288.1,61.0 289.5,62.2 291.8,61.5ZM323.1,91.5 327.9,91.1 327.3,94.0 323.1,92.3ZM316.6,85.6 318.8,86.0 318.7,89.2 317.0,89.6 316.9,87.0ZM318.4,81.5 318.5,83.5 318.1,84.8 317.2,82.9ZM340.0,96.1 344.3,96.7 344.1,97.2 340.1,96.9ZM353.4,97.2 354.5,96.5 356.8,95.9 356.0,97.2 354.5,98.0ZM521.3,55.1 523.2,59.8 523.6,65.9 525.2,68.2 522.9,72.8 523.3,74.6 521.3,75.0 521.3,70.5 521.3,63.5 520.9,57.7ZM518.3,84.6 520.6,81.5 520.9,76.3 522.9,78.7 526.4,78.9 526.7,80.8 523.6,83.5 520.6,82.5 519.0,83.5ZM520.6,85.0 521.3,88.6 519.8,91.5 519.7,95.4 518.3,96.9 516.7,97.2 513.7,98.0 511.8,100.0 510.6,98.2 507.6,98.6 504.5,99.1 504.5,98.0 507.6,96.3 512.2,95.9 513.4,93.1 516.0,92.7 517.5,90.6 518.3,87.6 518.7,85.6ZM504.5,99.5 506.0,100.9 505.0,104.0 503.3,104.2 502.5,100.9 503.7,99.5ZM506.8,99.1 509.9,98.7 509.6,100.0 507.6,101.3ZM490.0,114.6 490.7,115.8 488.9,120.0 488.0,118.3 488.9,115.8ZM470.4,124.4 472.4,123.2 473.9,123.9 472.4,125.8 470.4,125.5ZM488.4,125.7 491.0,126.0 490.7,128.9 490.1,132.4 493.8,134.4 493.0,134.7 490.7,133.2 488.9,133.2 488.1,131.6 488.1,129.4ZM490.7,143.8 493.0,141.3 495.9,139.6 497.6,142.2 497.2,144.5 496.1,145.6 493.8,144.5 492.7,143.0ZM490.7,136.3 494.6,135.4 496.2,137.6 495.3,139.1 493.0,140.4 491.5,139.4 490.7,138.3ZM483.5,141.4 486.9,137.1 487.2,138.0 484.3,141.8ZM470.8,152.2 471.6,151.4 473.9,152.1 474.4,150.2 477.0,149.6 478.5,147.5 480.8,146.1 482.8,143.8 484.1,144.8 486.4,146.4 484.6,147.9 484.1,149.9 484.6,151.4 486.1,153.0 484.3,153.3 483.8,155.7 482.3,156.8 482.3,159.1 481.5,160.6 479.4,160.8 479.2,159.7 477.0,159.4 475.1,159.9 472.7,158.9 472.4,156.8 471.1,155.3 470.8,154.0ZM449.9,145.9 453.2,146.5 455.1,148.7 457.5,150.7 459.4,151.7 462.1,153.7 462.9,156.0 463.9,157.3 466.2,159.1 466.1,163.4 464.1,163.5 463.2,162.2 460.6,160.6 458.6,158.5 457.5,156.0 455.5,153.7 454.8,151.7 452.8,149.6 450.2,147.1ZM465.0,164.9 466.2,163.5 469.3,164.2 470.5,164.9 473.1,165.1 473.9,164.3 476.6,165.1 479.2,166.3 479.1,167.9 475.4,167.2 471.6,166.5 469.3,166.5 466.9,165.9ZM480.0,167.1 482.6,167.2 486.1,167.2 486.1,168.0 483.1,168.3 480.3,168.0ZM487.4,167.4 492.3,167.1 492.0,168.0 487.7,168.2ZM486.1,169.1 488.9,169.7 487.7,170.4ZM493.0,170.4 495.3,168.6 498.7,167.4 496.9,168.6 494.2,170.2ZM487.4,153.4 488.9,152.5 492.3,153.0 495.6,152.1 494.6,153.7 492.3,153.7 489.2,153.7 488.0,154.5 487.8,155.7 490.0,156.0 492.7,155.7 490.7,157.3 490.4,158.5 492.0,160.0 492.3,161.9 490.7,161.9 490.0,160.6 489.2,158.6 488.1,158.9 488.3,161.9 488.1,162.9 486.9,162.9 486.9,159.9 485.8,158.8 486.6,156.5 487.4,154.7ZM499.1,151.4 500.7,152.2 499.9,153.7 500.7,155.3 499.6,154.5 499.1,153.0ZM499.9,159.1 503.7,159.1 504.2,160.0 500.7,159.9ZM504.5,155.7 506.8,155.1 509.1,155.7 510.6,159.6 514.5,156.9 519.8,158.5 525.2,160.3 527.5,162.2 530.2,163.7 529.0,164.9 531.3,168.0 534.3,170.4 532.1,170.2 529.8,169.9 527.5,167.6 525.2,166.3 523.2,167.6 522.9,168.6 519.8,168.5 517.5,166.9 515.2,167.4 516.4,165.2 515.2,162.9 511.4,161.2 507.6,160.6 507.1,158.9 508.8,158.2 506.0,157.7 504.5,156.6ZM531.3,162.9 534.3,162.9 537.0,160.9 537.1,162.2 534.3,164.0 532.1,164.0ZM426.1,139.7 426.8,139.4 429.2,143.0 428.3,145.0 426.8,145.5 426.0,143.0ZM478.6,188.7 479.4,189.9 478.0,191.5 477.7,194.0 478.5,197.4 480.0,202.7 481.1,206.2 480.0,210.3 482.3,211.8 484.6,211.8 487.7,209.9 493.0,209.7 496.9,206.8 501.4,205.5 504.5,205.3 508.3,206.6 510.6,209.9 511.8,211.4 514.5,208.1 514.9,207.3 514.5,209.9 513.7,212.1 515.2,210.4 516.0,211.8 515.2,213.1 517.5,213.6 519.0,217.5 523.6,219.0 525.9,217.5 528.1,219.6 530.5,217.3 533.6,216.3 534.0,213.6 535.4,209.7 537.4,206.2 538.2,202.7 539.1,200.0 538.5,194.9 536.6,193.2 534.8,190.7 532.5,187.4 529.0,184.6 527.5,181.7 526.4,177.7 524.4,176.6 523.6,174.3 522.1,171.0 520.9,173.8 520.6,177.7 519.5,181.7 517.5,181.7 514.9,179.3 511.4,177.7 512.2,174.9 513.4,173.3 510.6,173.2 507.6,172.4 504.5,173.3 502.2,177.4 499.9,177.7 498.1,176.1 495.3,178.5 493.8,180.0 493.2,181.4 491.0,182.2 490.7,183.8 489.2,185.1 486.1,185.8 482.8,186.7 480.0,188.2ZM525.5,222.8 528.2,223.6 531.0,223.2 530.8,225.9 529.8,228.0 527.8,228.8 526.4,226.5ZM17.3,210.6 19.8,212.9 21.6,214.8 22.7,216.7 25.4,216.7 26.2,216.9 25.1,219.8 23.9,220.4 23.6,222.4 21.3,224.6 20.5,224.0 20.8,222.0 19.3,220.4 20.2,218.4 20.4,216.1 19.8,214.6 17.8,212.1ZM568.3,210.6 570.8,212.9 572.6,214.8 573.7,216.7 576.4,216.7 577.2,216.9 576.1,219.8 574.9,220.4 574.6,222.4 572.3,224.6 571.5,224.0 571.8,222.0 570.3,220.4 571.2,218.4 571.4,216.1 570.8,214.6 568.8,212.1ZM17.3,222.4 19.6,223.8 19.3,225.5 17.5,228.2 17.8,229.2 15.0,230.7 14.3,233.8 12.4,235.3 10.6,235.3 7.8,233.8 10.1,230.1 14.0,227.5 15.5,225.0 16.6,223.0ZM568.3,222.4 570.6,223.8 570.3,225.5 568.5,228.2 568.8,229.2 566.0,230.7 565.3,233.8 563.4,235.3 561.6,235.3 558.8,233.8 561.1,230.1 565.0,227.5 566.5,225.0 567.6,223.0ZM173.9,120.1 177.0,118.3 180.0,118.0 183.1,119.1 186.1,120.6 189.2,122.1 190.4,122.9 188.4,123.4 185.1,123.4 184.6,122.1 182.3,120.6 179.3,119.6 177.3,119.1 175.4,120.0ZM190.1,125.8 191.8,123.4 194.3,123.4 196.9,123.7 199.3,125.5 198.4,125.8 196.1,126.2 194.7,127.0 193.0,126.2ZM184.2,125.8 187.2,126.2 186.9,126.6 184.6,126.8ZM201.1,125.7 203.6,126.0 203.3,126.5 201.1,126.5ZM213.2,71.4 215.2,67.1 217.1,62.7 218.9,62.2 218.6,65.9 221.3,67.1 222.9,69.4 223.3,71.7 222.1,73.5 219.8,73.0 218.3,71.4 216.0,71.4ZM107.6,63.9 111.9,65.4 115.0,69.4 113.1,69.2 110.4,67.1ZM100.4,55.4 102.3,55.9 103.2,60.5 101.5,58.5ZM67.5,47.0 70.6,45.0 70.6,47.0 68.3,48.4ZM618.5,47.0 621.6,45.0 621.6,47.0 619.3,48.4ZM209.9,16.8 206.0,27.7 204.5,31.7 199.9,31.1 193.8,25.9 190.7,24.2 184.6,24.2 185.4,20.6 191.5,18.7 192.3,10.9 186.1,3.2 183.1,0.0 173.9,2.3 167.8,-2.3 166.2,-12.2 173.9,-15.9 181.6,-15.9 189.2,-9.6 196.9,-2.3 199.9,2.3 201.5,6.7 207.6,12.9ZM170.8,21.7 174.7,19.5 180.0,25.9 177.0,27.3 173.1,28.7 170.8,27.0ZM121.9,-4.7 124.9,2.8 129.5,8.8 138.7,8.0 143.3,6.7 147.9,6.7 149.4,2.3 144.8,-2.3 143.3,-12.2 129.5,-12.2 121.9,-4.7ZM152.5,4.5 157.1,3.2 157.8,7.5 154.0,8.4ZM205.6,73.2 209.1,74.1 208.3,75.0 206.0,74.6ZM205.3,66.1 209.1,67.3 209.4,68.0 206.0,66.8ZM210.6,246.8 215.2,246.3 215.2,248.5 211.4,248.7ZM65.2,122.9 66.8,123.7 65.7,125.0 65.1,123.9ZM616.2,122.9 617.8,123.7 616.7,125.0 616.1,123.9ZM307.7,88.4 309.2,87.8 308.9,89.0 308.0,88.8ZM331.9,47.8 333.1,45.2 332.9,47.0ZM320.8,51.4 322.8,50.3 323.3,51.9 322.4,53.5 321.1,52.7ZM41.2,27.0 45.3,28.4 45.6,29.4 41.5,28.4ZM592.2,27.0 596.3,28.4 596.6,29.4 592.5,28.4ZM47.9,38.4 50.4,38.1 50.2,39.6 48.1,39.6ZM598.9,38.4 601.4,38.1 601.2,39.6 599.1,39.6ZM526.7,78.7 531.7,76.1 531.4,76.8 527.2,79.6ZM385.6,134.9 387.4,135.1 387.1,135.5 385.7,135.4ZM4.0,185.9 8.6,189.4 7.8,189.7 3.7,186.6ZM555.0,185.9 559.6,189.4 558.8,189.7 554.7,186.6ZM24.4,181.7 26.4,181.7 26.2,182.8 24.4,182.7ZM575.4,181.7 577.4,181.7 577.2,182.8 575.4,182.7ZM209.3,137.9 210.8,137.9 210.6,139.0 209.3,139.0Z" fill="#cee5c8"/>
<g clip-path="url(#landclip)"><path d="M346.9,50.6 365.2,55.9 395.8,51.9 418.8,53.3 441.8,57.2 464.7,61.0 487.7,59.8 506.0,68.2 515.2,70.5 519.8,58.5 512.2,42.0 490.7,32.7 457.1,25.9 426.4,24.2 395.8,27.7 372.9,25.9 349.9,32.7Z" fill="#bbdab6" opacity="0.95" filter="url(#b3)"/><path d="M108.1,45.0 123.4,54.6 144.8,55.9 155.5,64.7 161.7,72.8 164.7,79.4 161.7,91.5 158.6,100.9 160.1,106.3 177.0,107.2 184.6,99.1 189.2,89.6 199.9,77.2 209.1,72.8 215.2,61.0 207.6,50.6 187.7,55.9 169.3,47.8 150.9,42.0 128.0,32.7 108.1,29.4Z" fill="#bbdab6" opacity="0.9" filter="url(#b3)"/><path d="M186.1,148.4 196.9,145.3 209.1,144.5 221.3,147.6 229.0,154.5 233.6,162.2 230.5,171.4 221.3,177.7 209.1,177.7 199.9,176.1 192.3,171.4 186.1,162.2Z" fill="#b6d9b0" opacity="0.95" filter="url(#b3)"/><path d="M285.6,142.2 296.3,143.8 307.1,143.0 317.8,145.3 325.4,143.8 337.7,143.8 349.9,146.8 354.5,154.5 351.4,162.2 346.9,168.3 337.7,169.9 328.5,168.3 322.4,162.2 317.8,154.5 316.2,148.4 304.0,146.8 293.3,147.6Z" fill="#b8dab2" opacity="0.9" filter="url(#b3)"/><path d="M449.4,146.8 457.1,142.2 464.7,148.4 475.4,146.8 484.6,145.3 486.1,153.0 483.1,160.6 472.4,160.6 464.7,163.7 457.1,157.6 450.9,151.4Z" fill="#bddcb6" opacity="0.7" filter="url(#b3)"/><path d="M444.8,111.6 454.0,109.8 461.6,118.3 469.3,121.6 469.3,136.0 463.2,140.7 455.5,142.2 454.0,132.9 447.9,128.1 444.8,120.0Z" fill="#bddcb6" opacity="0.6" filter="url(#b3)"/><path d="M310.1,65.9 322.4,58.5 337.7,55.9 346.9,65.9 345.3,77.2 334.6,81.5 322.4,77.2 313.2,79.4 304.0,75.0Z" fill="#bddcb6" opacity="0.5" filter="url(#b3)"/><path d="M-81.7,25.9 -55.7,35.9 -32.7,37.5 -17.4,39.0 5.5,32.7 28.5,27.7 46.9,25.9 46.9,-29.4 -93.9,-43.1 -93.9,2.3Z" fill="#deead3" opacity="0.7" filter="url(#b3)"/><path d="M469.3,25.9 495.3,35.9 518.3,37.5 533.6,39.0 556.5,32.7 579.5,27.7 597.9,25.9 597.9,-29.4 457.1,-43.1 457.1,2.3Z" fill="#deead3" opacity="0.7" filter="url(#b3)"/><path d="M395.8,10.9 418.8,14.9 441.8,6.7 464.7,0.0 472.4,-29.4 395.8,-29.4Z" fill="#dfeadb" opacity="0.9" filter="url(#b3)"/><path d="M97.4,0.0 112.7,8.8 123.4,14.9 135.6,24.2 144.8,34.3 152.5,40.5 158.6,45.0 163.2,47.8 173.9,45.0 181.6,50.6 187.7,54.6 196.9,55.9 206.0,54.6 212.2,50.6 212.2,18.7 209.1,-7.1 150.9,-29.4 97.4,-29.4Z" fill="#e6ece0" opacity="1" filter="url(#b3)"/><path d="M648.4,0.0 663.7,8.8 674.4,14.9 686.6,24.2 695.8,34.3 703.5,40.5 709.6,45.0 714.2,47.8 724.9,45.0 732.6,50.6 738.7,54.6 747.9,55.9 757.0,54.6 763.2,50.6 763.2,18.7 760.1,-7.1 701.9,-29.4 648.4,-29.4Z" fill="#e6ece0" opacity="1" filter="url(#b3)"/><path d="M157.1,6.7 181.6,10.9 196.9,18.7 209.1,18.7 209.1,-12.2 157.1,-23.3Z" fill="#eef1ea" opacity="1" filter="url(#b2)"/><path d="M46.9,6.7 74.4,8.8 88.2,10.9 92.8,25.9 102.0,39.0 92.8,42.0 74.4,35.9 66.8,29.4 51.5,18.7Z" fill="#e4eddc" opacity="0.9" filter="url(#b3)"/><path d="M597.9,6.7 625.4,8.8 639.2,10.9 643.8,25.9 653.0,39.0 643.8,42.0 625.4,35.9 617.8,29.4 602.5,18.7Z" fill="#e4eddc" opacity="0.9" filter="url(#b3)"/><path d="M313.2,32.7 317.8,39.0 325.4,25.9 331.6,10.9 337.7,4.5 331.6,2.3 323.9,16.8 316.2,29.4Z" fill="#e4eddc" opacity="0.8" filter="url(#b2)"/><path d="M276.4,131.3 276.4,108.1 288.7,105.4 296.3,100.0 308.6,97.2 319.3,99.1 320.8,100.9 334.6,100.9 349.9,102.8 356.0,103.7 359.1,109.8 363.7,121.6 365.2,129.7 360.6,133.6 342.3,135.2 327.0,134.4 311.7,132.9 296.3,132.1 285.6,131.3Z" fill="#f5f1e1" opacity="1" filter="url(#b3)"/><path d="M356.0,103.7 359.1,99.1 363.7,93.5 371.3,93.5 374.4,97.2 377.5,102.8 380.5,104.6 385.1,108.1 391.2,109.8 397.4,113.3 402.0,113.3 408.1,115.0 412.7,115.0 415.7,109.8 414.2,104.6 409.6,99.1 405.0,93.5 395.8,91.5 388.2,91.5 385.1,94.4 379.0,96.3 375.9,100.9 377.5,106.3 382.1,115.0 389.7,114.1 395.8,120.0 389.7,128.1 383.6,130.5 372.9,135.2 369.8,134.4 368.3,128.1 363.7,121.6 359.1,113.3 356.8,108.1Z" fill="#f5f1e1" opacity="1" filter="url(#b3)"/><path d="M374.4,70.5 383.6,62.2 395.8,59.8 411.1,61.0 423.4,64.7 434.1,68.2 441.8,65.9 454.0,64.7 469.3,67.1 481.5,68.2 489.2,75.0 484.6,84.6 475.4,88.6 466.2,93.5 461.6,99.1 458.6,106.3 452.5,109.0 441.8,109.8 429.5,107.2 423.4,100.9 418.8,94.4 411.1,93.5 405.0,94.4 397.4,97.2 389.7,92.5 385.9,89.6 385.1,83.5 382.1,77.2 377.5,75.0Z" fill="#f5f1e1" opacity="1" filter="url(#b3)"/><path d="M424.9,104.6 432.6,107.2 443.3,109.0 454.0,107.2 458.6,100.9 454.0,94.4 441.8,93.5 429.5,95.4 423.4,99.1Z" fill="#f6f4ec" opacity="0.8" filter="url(#b2)"/><path d="M411.1,116.6 420.3,109.8 426.4,111.6 434.1,115.0 435.6,121.6 429.5,128.1 426.4,134.4 423.4,140.7 420.3,137.6 417.3,129.7 414.2,121.6Z" fill="#f5f1e1" opacity="0.55" filter="url(#b3)"/><path d="M114.2,68.7 129.5,68.2 131.0,59.8 138.7,57.2 149.4,63.5 155.5,68.2 158.6,75.0 158.6,87.6 157.1,99.1 155.5,108.1 154.0,113.3 152.5,120.0 149.4,124.1 144.8,124.1 141.8,118.3 135.6,111.6 131.0,104.6 128.0,102.8 124.9,100.9 121.9,97.2 118.8,94.4 115.7,89.6 115.0,81.5 115.7,75.0Z" fill="#f5f1e1" opacity="1" filter="url(#b3)"/><path d="M127.2,104.6 131.0,109.8 134.9,116.6 135.6,118.0 132.6,115.8 128.8,109.8 126.5,105.4Z" fill="#f5f1e1" opacity="1" filter="url(#b2)"/><path d="M-75.6,187.4 -75.6,199.2 -70.2,206.2 -64.9,209.9 -57.2,210.3 -49.6,206.6 -41.9,208.1 -35.8,211.8 -31.2,215.5 -25.1,215.5 -20.5,211.8 -18.2,202.7 -18.9,194.0 -23.5,185.8 -28.1,180.9 -34.3,178.5 -41.9,176.1 -48.0,176.9 -54.1,178.5 -60.3,182.5 -67.9,185.8Z" fill="#f5f1e1" opacity="1" filter="url(#b3)"/><path d="M475.4,187.4 475.4,199.2 480.8,206.2 486.1,209.9 493.8,210.3 501.4,206.6 509.1,208.1 515.2,211.8 519.8,215.5 525.9,215.5 530.5,211.8 532.8,202.7 532.1,194.0 527.5,185.8 522.9,180.9 516.7,178.5 509.1,176.1 503.0,176.9 496.9,178.5 490.7,182.5 483.1,185.8Z" fill="#f5f1e1" opacity="1" filter="url(#b3)"/><path d="M320.8,177.7 325.4,177.7 331.6,180.9 340.7,182.5 346.9,187.4 346.9,195.7 343.8,202.7 340.7,208.1 334.6,209.9 331.6,208.1 330.0,201.8 326.2,192.4 322.4,184.1Z" fill="#f5f1e1" opacity="1" filter="url(#b3)"/><path d="M196.9,206.2 203.0,204.4 207.6,211.8 209.1,221.4 205.3,225.5 203.7,234.0 201.5,243.1 199.2,249.2 193.8,246.8 193.8,234.0 194.6,221.4 195.3,213.6Z" fill="#f5f1e1" opacity="1" filter="url(#b2)"/><path d="M179.3,161.4 183.1,163.7 187.7,171.4 193.8,177.7 199.2,182.5 202.2,189.0 200.7,197.4 198.4,204.4 193.8,204.4 195.6,192.4 195.6,183.3 186.9,176.9 181.6,166.8Z" fill="#f5f1e1" opacity="1" filter="url(#b2)"/><path d="M365.2,136.0 370.6,136.8 382.8,136.0 380.5,142.2 375.9,148.4 369.8,153.0 366.8,156.8 364.5,151.4 367.5,145.3 369.8,140.7Z" fill="#f5f1e1" opacity="1" filter="url(#b2)"/><path d="M290.2,91.5 294.8,84.6 300.9,83.5 304.0,87.6 302.5,91.5 297.9,93.5Z" fill="#f5f1e1" opacity="0.7" filter="url(#b2)"/><path d="M346.9,93.5 353.0,87.6 362.2,87.6 369.8,88.6 371.3,92.5 362.2,94.4 353.0,93.8Z" fill="#f5f1e1" opacity="0.8" filter="url(#b2)"/><path d="M189.2,39.0 212.2,45.0 239.7,45.0 273.4,10.9 281.0,-29.4 212.2,-29.4 215.2,2.3 218.3,18.7Z" fill="#f6f6f3" opacity="1" filter="url(#b2)"/></g>
<path d="M375.9,76.1 379.0,73.9 382.8,72.8 385.1,73.9 385.1,76.6 382.4,77.2 381.3,78.3 382.4,80.4 384.4,82.5 384.8,84.6 386.3,86.0 385.1,87.6 385.9,89.6 386.6,92.5 385.1,93.8 382.8,94.0 380.5,92.9 379.0,91.0 379.5,87.2 378.2,84.0 376.7,81.5 375.9,78.3ZM393.5,73.9 395.8,73.5 397.4,75.0 396.3,77.2 394.3,77.6 393.4,76.1ZM163.2,73.2 166.2,71.0 168.5,69.2 171.6,69.4 174.2,71.0 174.5,73.7 172.4,73.7 170.1,73.9 168.5,72.8 165.5,73.7ZM169.6,83.5 171.1,84.2 171.9,81.5 172.1,78.3 173.4,76.6 173.9,75.5 171.9,75.5 170.1,77.0 169.3,78.3 169.9,80.4ZM174.5,75.0 177.0,74.6 180.0,75.0 181.9,77.6 179.6,78.1 179.0,81.0 177.7,81.5 176.5,79.4 176.2,76.8ZM176.4,84.0 177.7,84.8 180.0,84.2 183.1,82.1 182.8,81.7 180.0,82.1 177.7,83.3ZM181.9,80.8 184.6,80.8 187.2,80.4 187.2,79.1 184.6,79.6 182.6,80.0ZM152.8,56.4 154.3,56.4 156.6,63.5 155.8,64.9 154.8,62.2 152.8,59.0ZM124.9,35.9 128.8,35.9 132.6,32.7 136.4,30.4 135.6,29.4 131.0,31.4 127.2,31.7 124.9,34.6ZM115.0,22.4 118.8,21.3 123.4,21.3 123.4,16.8 120.3,14.9 117.3,16.8 114.2,18.7ZM133.3,43.2 138.7,42.0 141.0,41.1 138.7,40.5 134.1,41.7ZM352.7,155.0 354.5,153.9 356.3,154.5 356.0,156.8 355.3,158.5 353.0,158.5 352.5,156.8ZM348.7,159.9 349.6,162.2 351.1,167.6 350.4,167.7 348.8,163.7 348.4,160.6ZM356.0,169.3 357.0,170.7 357.6,176.1 356.8,176.1 356.0,171.4ZM462.9,62.0 465.5,61.0 469.3,56.4 472.1,51.4 470.8,51.7 467.8,55.9 464.7,59.5ZM416.5,76.1 418.8,73.5 424.1,73.9 424.9,74.6 419.6,75.0 417.3,77.2ZM350.7,38.4 352.2,39.3 354.2,37.5 353.7,35.0 351.4,34.3 349.9,35.9ZM356.8,35.9 359.1,35.9 359.1,31.7 356.8,31.1ZM323.1,43.2 325.1,43.5 325.4,41.4 323.9,41.1ZM196.9,178.4 198.4,178.8 198.9,180.0 197.3,179.6ZM172.5,136.2 173.9,136.3 174.2,137.4 173.0,137.1ZM146.4,49.2 148.6,48.4 148.6,45.0 146.7,45.5Z" fill="#aadaff"/>
<path d="M115.4,68.2 158.3,68.2 159.1,67.5 163.2,69.8 167.0,70.5 168.9,70.1 174.2,73.2 176.2,75.0 177.7,76.6 178.2,80.4 177.0,83.1 178.5,84.0 183.1,81.9 182.9,80.4 186.5,80.2 189.2,77.2 194.6,77.2 196.1,74.6 198.1,71.9 199.9,72.1 200.2,75.5 201.5,77.2M88.2,4.1 88.2,38.1 91.3,39.0 93.5,42.3 96.6,39.9 99.7,43.5 102.3,48.6 105.0,50.6 104.6,53.8M124.8,101.9 128.3,101.9 134.1,104.0 138.4,104.0 138.4,103.1 141.0,103.1 144.1,107.0 146.4,108.1 147.1,106.7 149.4,107.2 151.7,110.7 152.5,112.6 155.2,113.4M162.9,132.1 164.0,127.8 167.5,126.8 168.9,125.8M194.6,136.0 192.3,140.7 193.8,143.8 200.7,145.3 201.5,152.7M201.5,152.7 206.0,148.4 211.1,146.5M201.5,152.7 196.9,154.5 196.9,160.9M183.1,152.2 188.4,154.5 188.9,155.3 196.9,160.9M196.9,160.9 192.3,165.2 193.8,169.9 197.6,171.4M197.6,171.4 204.1,169.9 212.2,175.4 212.2,179.3 215.2,181.7 215.2,185.8 209.1,189.0 205.3,189.0 201.5,190.4 199.9,188.2 197.6,181.7 198.4,177.7 197.6,171.4M181.1,159.7 183.1,162.2 184.6,159.1 188.7,155.3M201.5,190.4 199.2,194.0 197.2,202.7 196.9,208.1 196.1,213.6 194.6,221.4 194.1,229.6 193.0,238.5 193.0,245.5 199.2,248.7M209.1,189.0 215.2,185.8 215.5,189.0 218.9,189.9 220.6,192.4 220.4,195.1 215.8,198.0 214.5,197.8 215.8,194.5 208.3,189.4M220.4,195.1 221.7,197.8 215.8,203.0 222.3,209.3M214.6,209.9 215.2,206.2 215.8,203.0M211.1,146.5 212.5,147.6 213.7,152.5 217.5,151.4 221.3,151.1 224.9,148.4M321.1,42.0 322.8,35.9 322.7,29.4 325.4,24.2 327.7,17.6 331.6,8.8 335.4,6.7M340.7,19.5 340.0,12.9 335.4,6.7 342.3,6.7 348.2,6.3M346.5,37.5 349.9,32.7 352.2,29.4 349.9,25.9 349.6,18.7 348.4,12.1 349.9,6.7 348.2,6.3M347.2,40.8 346.1,46.4 347.2,50.0 351.1,51.7 352.2,58.0 355.3,60.3 358.3,63.5 362.2,65.9 365.2,66.8 364.9,71.0 362.5,72.6M338.0,69.6 340.7,61.3 350.7,62.2 352.2,60.8M367.5,84.6 370.6,85.4 372.6,88.2 371.3,92.9 368.7,93.1 362.2,93.8 360.0,93.8M365.2,80.4 371.3,82.3 375.2,84.0 378.2,84.0M379.0,73.9 375.9,70.5 375.2,68.2 376.7,64.7 382.1,61.7 388.2,63.5 393.5,63.5 398.1,62.2 397.4,56.4 403.5,54.6 409.6,52.5 412.7,55.4 416.5,55.9 421.1,55.1 423.4,58.5 426.4,63.5 431.8,63.5 437.6,67.8M437.6,67.8 434.9,72.8 431.0,72.4 430.3,76.8 426.9,77.2 426.8,83.1M426.8,83.1 418.8,81.7 412.7,82.5 409.6,85.0 405.8,85.2 405.0,81.5 397.4,78.3 393.5,76.1 389.7,77.2 389.7,85.0 386.6,83.5 384.4,84.0M438.4,67.8 444.8,63.9 454.0,61.0 460.1,62.5 467.8,65.9 477.0,65.9 482.3,66.3 487.4,72.8 480.8,76.1 475.1,80.0 464.7,84.4 452.5,81.9 443.3,76.8 438.4,67.8M482.3,66.3 487.7,57.7 496.9,58.5 504.5,70.5 510.6,69.4 507.6,77.2 504.5,81.5 503.9,82.7M494.2,87.6 499.9,84.2 503.9,82.7M426.8,83.1 417.3,87.6 416.5,90.6 418.5,93.5 424.1,96.3 424.9,101.9 428.0,106.0 438.7,109.8 444.8,110.2 452.5,109.3 454.8,110.7 454.8,115.8 457.1,120.8 459.4,121.3 460.4,119.3 466.2,118.6 469.3,120.8M408.4,117.1 412.7,115.8 411.1,110.2 415.7,106.3 418.0,101.9 421.1,98.2 424.1,96.3M397.4,106.7 405.5,106.5 410.4,102.8 411.1,100.0 413.4,97.2 413.4,94.4 418.5,93.5M397.4,106.7 397.1,99.1 397.7,96.1 394.3,92.5 389.7,91.5 386.6,92.9M398.1,114.8 400.4,111.2 397.4,106.7M397.7,96.1 402.7,94.4 405.8,92.7 412.7,92.5 418.5,93.5M405.8,92.7 405.8,89.6 398.9,84.6 393.5,82.1 389.7,85.0M378.2,106.3 377.2,103.1 374.4,100.6 373.6,97.2 374.7,95.7 372.6,93.1 372.6,88.2M378.1,109.0 375.2,107.9 372.4,107.7 368.3,104.2 363.7,102.4 360.6,103.7 361.4,106.3 359.1,107.7 357.6,107.4M363.7,102.2 366.8,98.4 367.2,94.4 368.7,93.1M369.5,129.0 371.3,127.4 375.9,128.1 383.6,124.9 388.9,123.2 389.3,120.0 388.5,118.8 384.4,118.5 383.0,116.1M383.6,124.9 385.3,128.7M438.7,109.8 438.7,112.4 441.4,112.9 444.8,111.9M438.7,112.4 432.6,110.7 426.8,108.4 428.0,106.0M445.3,121.9 445.6,117.5 447.1,116.6 449.4,111.6 452.5,109.3M457.1,120.8 457.8,123.2 453.7,126.5 454.8,129.7 455.5,136.8M459.4,121.3 458.6,126.5 463.2,126.0 465.5,132.1 468.5,132.1 468.5,136.0M342.3,103.5 342.3,120.0 360.5,120.0M342.3,120.0 342.3,123.2 340.7,123.2 340.7,124.1 328.5,117.6 327.0,118.3 325.7,119.0 322.4,117.5 319.0,112.4 318.5,106.0 321.6,100.8M318.5,106.0 316.6,100.9 317.2,93.7M322.4,117.5 315.5,121.9 310.4,124.7 309.1,124.9 305.8,121.9 296.7,115.0 290.7,111.0 290.7,108.6 298.5,104.6 302.2,102.2 301.2,97.6 300.6,97.1M290.7,110.3 283.8,110.3M290.7,111.0 285.6,117.6 284.1,118.3 284.1,121.1 278.0,121.1M296.7,115.0 294.1,115.0 295.6,128.9 295.9,130.5 285.3,131.6M310.4,124.7 310.4,128.4 309.4,130.6 304.3,131.3M327.0,118.3 327.7,121.6 327.7,128.3 324.7,132.1 324.8,133.3M309.5,136.5 310.1,133.6 314.7,134.4 319.3,134.0 324.8,133.3M340.7,124.1 340.7,130.2 338.4,132.9 339.0,137.6 340.1,141.1 346.9,139.9 354.5,139.1 356.0,139.9 359.9,132.4 360.6,128.1 363.1,126.5M369.7,137.6 369.8,139.9 377.5,142.2 372.9,146.8 368.3,148.1 362.2,149.0 359.1,147.8 356.0,148.1M356.0,156.0 361.7,159.1 364.0,161.7M366.8,157.1 366.8,149.9 368.3,148.1M322.7,163.5 328.5,163.5 330.0,165.2 330.8,166.8 333.8,165.2 337.4,165.7 337.7,171.4 340.7,171.4 342.7,172.5 346.1,173.3 348.4,175.2 349.6,173.3 347.5,172.7 347.8,168.3 351.1,167.2 348.7,163.7 348.7,159.1 349.3,156.6 349.9,153.0 351.8,151.1 351.1,149.1 345.9,146.8 342.3,146.8 338.3,148.2 333.8,146.8 332.5,149.1 331.2,155.3 328.8,157.6 328.3,160.6 326.2,162.0 323.9,161.5M322.1,181.4 324.7,180.9 332.3,181.6 339.8,181.9M337.7,171.4 337.7,174.6 340.7,174.6 337.7,180.1 339.8,181.9 342.7,182.2M336.1,182.5 336.1,189.0 334.6,189.0 334.6,193.7 334.6,199.9 330.0,199.3 329.3,200.2M334.6,193.7 337.7,196.6 343.0,195.2 345.3,191.9 349.0,189.4M342.7,182.2 345.3,182.5 348.2,179.2 350.5,178.7 354.5,180.9 354.2,185.8 351.9,189.7 349.0,189.4 346.2,186.6 342.7,182.2M351.9,189.7 353.0,197.1M357.4,172.2 365.8,170.7M351.1,167.2 354.4,169.0 356.0,169.3M317.2,147.1 318.5,144.5 321.6,143.8 323.9,139.9 326.2,136.8 325.4,134.4M308.1,144.8 309.5,136.5M301.2,80.6 305.1,81.9 308.9,82.7M290.5,83.5 294.1,83.5 293.3,90.6 292.7,93.1" fill="none" stroke="#8f8f8f" stroke-width=".4" opacity=".42" stroke-linejoin="round"/><path d="M501.4,177.4 501.4,205.5M501.4,195.7 519.8,195.7M515.2,180.1 515.2,195.7M519.8,195.7 519.8,217.5M519.8,200.9 532.1,200.9 538.9,199.7M519.8,209.9 529.0,213.6 533.6,216.5M120.3,83.5 134.1,83.5 134.1,77.2 144.8,77.2 144.8,85.6 157.8,86.6M120.3,83.5 120.3,89.6 128.6,97.2M129.5,93.5 159.4,93.5M137.2,103.7 137.2,85.6M147.9,93.5 147.9,85.6M144.8,77.2 144.8,68.2M126.5,68.2 124.9,79.4 134.1,77.2M144.8,81.5 156.3,81.5M144.8,75.0 156.3,75.0M164.7,86.6 164.7,94.4M159.4,100.0 159.4,94.4 166.2,94.4 178.5,94.2 187.7,94.2M169.3,97.2 177.0,97.2M173.9,97.2 173.9,104.6M168.9,97.2 168.9,105.4M150.9,94.4 150.9,98.2 159.4,99.5M146.4,102.8 146.4,94.4M141.0,102.8 146.4,102.8" fill="none" stroke="#8f8f8f" stroke-width=".4" opacity=".4" stroke-dasharray=".8,.7"/><path d="M0,154.8 H626" stroke="#aaa2c6" stroke-width="0.8" stroke-dasharray="2.6,1.4" fill="none"/><path d="M41.5,-2.0 43.5,7.0 45.0,15.0 45.0,22.5 30.8,35.6 13.5,58.1 28.5,70.7 28.5,157.0 59.3,157.0 59.3,149.9 55.3,149.9 55.3,144.9 64.5,144.9 75.4,171.7 68.8,172.7 68.8,171.7 48.6,171.7 40.8,178.3 40.8,231.0 28.5,245.7 28.5,271.0" stroke="#8f8aa6" stroke-width="0.85" stroke-dasharray="2.2,1" fill="none"/><path d="M592.5,-2.0 594.5,7.0 596.0,15.0 596.0,22.5 581.8,35.6 564.5,58.1 579.5,70.7 579.5,157.0 610.3,157.0 610.3,149.9 606.3,149.9 606.3,144.9 615.5,144.9 626.4,171.7 619.8,172.7 619.8,171.7 599.6,171.7 591.8,178.3 591.8,231.0 579.5,245.7 579.5,271.0" stroke="#8f8aa6" stroke-width="0.85" stroke-dasharray="2.2,1" fill="none"/><g font-family="Liberation Sans" font-size="5.6" text-anchor="middle" fill="none" stroke="#fff" stroke-width="1" stroke-linejoin="round" stroke-opacity=".75"><text transform="translate(144.9,56.9) scale(.86,1)">Kanada</text><text transform="translate(148.8,90.6) scale(.86,1)">USA</text><text transform="translate(147.4,119.4) scale(.86,1)">Mexiko</text><text transform="translate(203.1,144.5) scale(.86,1)">Venezuela</text><text transform="translate(187.7,150.8) scale(.86,1)">Kolumbien</text><text transform="translate(218.9,170.0) scale(.86,1)">Brasilien</text><text transform="translate(187.7,174.0) scale(.86,1)">Peru</text><text transform="translate(205.4,182.8) scale(.86,1)">Bolivien</text><text transform="translate(196.4,199.4) scale(.86,1)">Chile</text><text transform="translate(209.0,222.1) scale(.86,1)">Argentinien</text><text transform="translate(275.8,24.7) scale(.86,1)">Island</text><text transform="translate(344.8,15.1) scale(.86,1)">Finnland</text><text transform="translate(329.9,26.9) scale(.86,1)">Schweden</text><text transform="translate(315.5,38.5) scale(.86,1)">Norwegen</text><text transform="translate(298.1,50.5) scale(.86,1)">Vereinigtes</text><text transform="translate(298.1,55.3) scale(.86,1)">Königreich</text><text transform="translate(333.0,61.1) scale(.86,1)">Polen</text><text transform="translate(354.0,69.3) scale(.86,1)">Ukraine</text><text transform="translate(308.2,77.4) scale(.86,1)">Frankreich</text><text transform="translate(299.6,86.2) scale(.86,1)">Spanien</text><text transform="translate(322.0,83.7) scale(.86,1)">Italien</text><text transform="translate(358.2,92.2) scale(.86,1)">Türkei</text><text transform="translate(447.9,35.0) scale(.86,1)">Russland</text><text transform="translate(407.4,72.6) scale(.86,1)">Kasachstan</text><text transform="translate(462.6,75.7) scale(.86,1)">Mongolei</text><text transform="translate(463.2,95.2) scale(.86,1)">China</text><text transform="translate(498.8,97.5) scale(.86,1)">Südkorea</text><text transform="translate(519.1,92.0) scale(.86,1)">Japan</text><text transform="translate(370.1,103.2) scale(.86,1)">Irak</text><text transform="translate(387.6,105.9) scale(.86,1)">Iran</text><text transform="translate(408.3,101.0) scale(.86,1)">Afghanistan</text><text transform="translate(409.5,110.8) scale(.86,1)">Pakistan</text><text transform="translate(425.7,120.9) scale(.86,1)">Indien</text><text transform="translate(459.1,125.5) scale(.86,1)">Thailand</text><text transform="translate(306.8,112.2) scale(.86,1)">Algerien</text><text transform="translate(331.0,114.0) scale(.86,1)">Libyen</text><text transform="translate(349.8,111.7) scale(.86,1)">Ägypten</text><text transform="translate(373.5,119.5) scale(.86,1)">Saudi-Arabien</text><text transform="translate(301.3,129.3) scale(.86,1)">Mali</text><text transform="translate(319.5,129.5) scale(.86,1)">Niger</text><text transform="translate(350.8,130.5) scale(.86,1)">Sudan</text><text transform="translate(334.0,134.9) scale(.86,1)">Tschad</text><text transform="translate(317.5,142.4) scale(.86,1)">Nigeria</text><text transform="translate(365.0,143.3) scale(.86,1)">Äthiopien</text><text transform="translate(338.9,156.8) scale(.86,1)">Demokratische</text><text transform="translate(339.2,161.9) scale(.86,1)">Republik Kongo</text><text transform="translate(361.2,166.5) scale(.86,1)">Tansania</text><text transform="translate(329.5,176.3) scale(.86,1)">Angola</text><text transform="translate(328.2,187.2) scale(.86,1)">Namibia</text><text transform="translate(340.2,193.6) scale(.86,1)">Botsuana</text><text transform="translate(375.6,190.2) scale(.86,1)">Madagaskar</text><text transform="translate(333.5,210.9) scale(.86,1)">Südafrika</text><text transform="translate(482.0,163.3) scale(.86,1)">Indonesien</text><text transform="translate(529.6,166.6) scale(.86,1)">Papua-Neuguinea</text><text transform="translate(510.0,196.9) scale(.86,1)">Australien</text><text transform="translate(559.2,224.8) scale(.86,1)">Neuseeland</text><text transform="translate(7.2,224.8) scale(.86,1)">Neuseeland</text></g><g font-family="Liberation Sans" font-size="5.6" text-anchor="middle" fill="#1c1c1c" stroke="#1c1c1c" stroke-width=".12"><text transform="translate(144.9,56.9) scale(.86,1)">Kanada</text><text transform="translate(148.8,90.6) scale(.86,1)">USA</text><text transform="translate(147.4,119.4) scale(.86,1)">Mexiko</text><text transform="translate(203.1,144.5) scale(.86,1)">Venezuela</text><text transform="translate(187.7,150.8) scale(.86,1)">Kolumbien</text><text transform="translate(218.9,170.0) scale(.86,1)">Brasilien</text><text transform="translate(187.7,174.0) scale(.86,1)">Peru</text><text transform="translate(205.4,182.8) scale(.86,1)">Bolivien</text><text transform="translate(196.4,199.4) scale(.86,1)">Chile</text><text transform="translate(209.0,222.1) scale(.86,1)">Argentinien</text><text transform="translate(275.8,24.7) scale(.86,1)">Island</text><text transform="translate(344.8,15.1) scale(.86,1)">Finnland</text><text transform="translate(329.9,26.9) scale(.86,1)">Schweden</text><text transform="translate(315.5,38.5) scale(.86,1)">Norwegen</text><text transform="translate(298.1,50.5) scale(.86,1)">Vereinigtes</text><text transform="translate(298.1,55.3) scale(.86,1)">Königreich</text><text transform="translate(333.0,61.1) scale(.86,1)">Polen</text><text transform="translate(354.0,69.3) scale(.86,1)">Ukraine</text><text transform="translate(308.2,77.4) scale(.86,1)">Frankreich</text><text transform="translate(299.6,86.2) scale(.86,1)">Spanien</text><text transform="translate(322.0,83.7) scale(.86,1)">Italien</text><text transform="translate(358.2,92.2) scale(.86,1)">Türkei</text><text transform="translate(447.9,35.0) scale(.86,1)">Russland</text><text transform="translate(407.4,72.6) scale(.86,1)">Kasachstan</text><text transform="translate(462.6,75.7) scale(.86,1)">Mongolei</text><text transform="translate(463.2,95.2) scale(.86,1)">China</text><text transform="translate(498.8,97.5) scale(.86,1)">Südkorea</text><text transform="translate(519.1,92.0) scale(.86,1)">Japan</text><text transform="translate(370.1,103.2) scale(.86,1)">Irak</text><text transform="translate(387.6,105.9) scale(.86,1)">Iran</text><text transform="translate(408.3,101.0) scale(.86,1)">Afghanistan</text><text transform="translate(409.5,110.8) scale(.86,1)">Pakistan</text><text transform="translate(425.7,120.9) scale(.86,1)">Indien</text><text transform="translate(459.1,125.5) scale(.86,1)">Thailand</text><text transform="translate(306.8,112.2) scale(.86,1)">Algerien</text><text transform="translate(331.0,114.0) scale(.86,1)">Libyen</text><text transform="translate(349.8,111.7) scale(.86,1)">Ägypten</text><text transform="translate(373.5,119.5) scale(.86,1)">Saudi-Arabien</text><text transform="translate(301.3,129.3) scale(.86,1)">Mali</text><text transform="translate(319.5,129.5) scale(.86,1)">Niger</text><text transform="translate(350.8,130.5) scale(.86,1)">Sudan</text><text transform="translate(334.0,134.9) scale(.86,1)">Tschad</text><text transform="translate(317.5,142.4) scale(.86,1)">Nigeria</text><text transform="translate(365.0,143.3) scale(.86,1)">Äthiopien</text><text transform="translate(338.9,156.8) scale(.86,1)">Demokratische</text><text transform="translate(339.2,161.9) scale(.86,1)">Republik Kongo</text><text transform="translate(361.2,166.5) scale(.86,1)">Tansania</text><text transform="translate(329.5,176.3) scale(.86,1)">Angola</text><text transform="translate(328.2,187.2) scale(.86,1)">Namibia</text><text transform="translate(340.2,193.6) scale(.86,1)">Botsuana</text><text transform="translate(375.6,190.2) scale(.86,1)">Madagaskar</text><text transform="translate(333.5,210.9) scale(.86,1)">Südafrika</text><text transform="translate(482.0,163.3) scale(.86,1)">Indonesien</text><text transform="translate(529.6,166.6) scale(.86,1)">Papua-Neuguinea</text><text transform="translate(510.0,196.9) scale(.86,1)">Australien</text><text transform="translate(559.2,224.8) scale(.86,1)">Neuseeland</text><text transform="translate(7.2,224.8) scale(.86,1)">Neuseeland</text></g><g font-family="Liberation Sans" font-size="6.6" fill="#5c8fc4" text-anchor="middle" letter-spacing="1.05"><text x="49.1" y="93.6">Nördlicher</text><text x="49.1" y="100.7">Stiller Ozean</text><text x="600.2" y="93.6">Nördlicher</text><text x="600.2" y="100.7">Stiller Ozean</text><text x="242.0" y="93.3">Nord</text><text x="242.3" y="100.6">Atlantischer</text><text x="242.0" y="107.9">Ozean</text><text x="94.6" y="204.3">Südpazifik</text><text x="281.5" y="203.8">Südatlantik</text><text x="427.7" y="188.9">Indischer</text><text x="427.7" y="196.3">Ozean</text></g><path d="M112.8,76.6l1,-1 1.9,1.1 1.9,-1.1 1,1 -1.1,1.9 1.1,1.9 -1,1 -1.9,-1.1 -1.9,1.1 -1,-1 1.1,-1.9zM135.7,73.8l1,-1 1.9,1.1 1.9,-1.1 1,1 -1.1,1.9 1.1,1.9 -1,1 -1.9,-1.1 -1.9,1.1 -1,-1 1.1,-1.9zM132.1,74.8l1,-1 1.9,1.1 1.9,-1.1 1,1 -1.1,1.9 1.1,1.9 -1,1 -1.9,-1.1 -1.9,1.1 -1,-1 1.1,-1.9zM130.6,77.4l1,-1 1.9,1.1 1.9,-1.1 1,1 -1.1,1.9 1.1,1.9 -1,1 -1.9,-1.1 -1.9,1.1 -1,-1 1.1,-1.9zM130.1,79.9l1,-1 1.9,1.1 1.9,-1.1 1,1 -1.1,1.9 1.1,1.9 -1,1 -1.9,-1.1 -1.9,1.1 -1,-1 1.1,-1.9zM114.6,87.6l1,-1 1.9,1.1 1.9,-1.1 1,1 -1.1,1.9 1.1,1.9 -1,1 -1.9,-1.1 -1.9,1.1 -1,-1 1.1,-1.9zM115.1,91.1l1,-1 1.9,1.1 1.9,-1.1 1,1 -1.1,1.9 1.1,1.9 -1,1 -1.9,-1.1 -1.9,1.1 -1,-1 1.1,-1.9zM120.1,97.5l1,-1 1.9,1.1 1.9,-1.1 1,1 -1.1,1.9 1.1,1.9 -1,1 -1.9,-1.1 -1.9,1.1 -1,-1 1.1,-1.9zM129.6,98.4l1,-1 1.9,1.1 1.9,-1.1 1,1 -1.1,1.9 1.1,1.9 -1,1 -1.9,-1.1 -1.9,1.1 -1,-1 1.1,-1.9zM152.5,75.0l1,-1 1.9,1.1 1.9,-1.1 1,1 -1.1,1.9 1.1,1.9 -1,1 -1.9,-1.1 -1.9,1.1 -1,-1 1.1,-1.9zM158.3,75.3l1,-1 1.9,1.1 1.9,-1.1 1,1 -1.1,1.9 1.1,1.9 -1,1 -1.9,-1.1 -1.9,1.1 -1,-1 1.1,-1.9zM154.5,84.0l1,-1 1.9,1.1 1.9,-1.1 1,1 -1.1,1.9 1.1,1.9 -1,1 -1.9,-1.1 -1.9,1.1 -1,-1 1.1,-1.9zM156.5,87.0l1,-1 1.9,1.1 1.9,-1.1 1,1 -1.1,1.9 1.1,1.9 -1,1 -1.9,-1.1 -1.9,1.1 -1,-1 1.1,-1.9zM157.6,89.6l1,-1 1.9,1.1 1.9,-1.1 1,1 -1.1,1.9 1.1,1.9 -1,1 -1.9,-1.1 -1.9,1.1 -1,-1 1.1,-1.9zM154.0,92.6l1,-1 1.9,1.1 1.9,-1.1 1,1 -1.1,1.9 1.1,1.9 -1,1 -1.9,-1.1 -1.9,1.1 -1,-1 1.1,-1.9zM154.5,94.7l1,-1 1.9,1.1 1.9,-1.1 1,1 -1.1,1.9 1.1,1.9 -1,1 -1.9,-1.1 -1.9,1.1 -1,-1 1.1,-1.9zM165.2,80.4l1,-1 1.9,1.1 1.9,-1.1 1,1 -1.1,1.9 1.1,1.9 -1,1 -1.9,-1.1 -1.9,1.1 -1,-1 1.1,-1.9zM167.2,82.4l1,-1 1.9,1.1 1.9,-1.1 1,1 -1.1,1.9 1.1,1.9 -1,1 -1.9,-1.1 -1.9,1.1 -1,-1 1.1,-1.9zM168.7,84.0l1,-1 1.9,1.1 1.9,-1.1 1,1 -1.1,1.9 1.1,1.9 -1,1 -1.9,-1.1 -1.9,1.1 -1,-1 1.1,-1.9zM166.2,83.5l1,-1 1.9,1.1 1.9,-1.1 1,1 -1.1,1.9 1.1,1.9 -1,1 -1.9,-1.1 -1.9,1.1 -1,-1 1.1,-1.9zM176.2,83.5l1,-1 1.9,1.1 1.9,-1.1 1,1 -1.1,1.9 1.1,1.9 -1,1 -1.9,-1.1 -1.9,1.1 -1,-1 1.1,-1.9zM182.3,77.1l1,-1 1.9,1.1 1.9,-1.1 1,1 -1.1,1.9 1.1,1.9 -1,1 -1.9,-1.1 -1.9,1.1 -1,-1 1.1,-1.9zM187.6,82.4l1,-1 1.9,1.1 1.9,-1.1 1,1 -1.1,1.9 1.1,1.9 -1,1 -1.9,-1.1 -1.9,1.1 -1,-1 1.1,-1.9zM190.6,81.9l1,-1 1.9,1.1 1.9,-1.1 1,1 -1.1,1.9 1.1,1.9 -1,1 -1.9,-1.1 -1.9,1.1 -1,-1 1.1,-1.9zM192.7,83.0l1,-1 1.9,1.1 1.9,-1.1 1,1 -1.1,1.9 1.1,1.9 -1,1 -1.9,-1.1 -1.9,1.1 -1,-1 1.1,-1.9zM189.6,85.0l1,-1 1.9,1.1 1.9,-1.1 1,1 -1.1,1.9 1.1,1.9 -1,1 -1.9,-1.1 -1.9,1.1 -1,-1 1.1,-1.9zM187.1,86.0l1,-1 1.9,1.1 1.9,-1.1 1,1 -1.1,1.9 1.1,1.9 -1,1 -1.9,-1.1 -1.9,1.1 -1,-1 1.1,-1.9zM182.5,88.0l1,-1 1.9,1.1 1.9,-1.1 1,1 -1.1,1.9 1.1,1.9 -1,1 -1.9,-1.1 -1.9,1.1 -1,-1 1.1,-1.9zM185.6,88.6l1,-1 1.9,1.1 1.9,-1.1 1,1 -1.1,1.9 1.1,1.9 -1,1 -1.9,-1.1 -1.9,1.1 -1,-1 1.1,-1.9zM185.0,91.6l1,-1 1.9,1.1 1.9,-1.1 1,1 -1.1,1.9 1.1,1.9 -1,1 -1.9,-1.1 -1.9,1.1 -1,-1 1.1,-1.9zM182.5,93.1l1,-1 1.9,1.1 1.9,-1.1 1,1 -1.1,1.9 1.1,1.9 -1,1 -1.9,-1.1 -1.9,1.1 -1,-1 1.1,-1.9zM179.4,94.7l1,-1 1.9,1.1 1.9,-1.1 1,1 -1.1,1.9 1.1,1.9 -1,1 -1.9,-1.1 -1.9,1.1 -1,-1 1.1,-1.9zM176.4,96.2l1,-1 1.9,1.1 1.9,-1.1 1,1 -1.1,1.9 1.1,1.9 -1,1 -1.9,-1.1 -1.9,1.1 -1,-1 1.1,-1.9zM174.9,97.2l1,-1 1.9,1.1 1.9,-1.1 1,1 -1.1,1.9 1.1,1.9 -1,1 -1.9,-1.1 -1.9,1.1 -1,-1 1.1,-1.9zM159.1,104.8l1,-1 1.9,1.1 1.9,-1.1 1,1 -1.1,1.9 1.1,1.9 -1,1 -1.9,-1.1 -1.9,1.1 -1,-1 1.1,-1.9zM162.1,105.3l1,-1 1.9,1.1 1.9,-1.1 1,1 -1.1,1.9 1.1,1.9 -1,1 -1.9,-1.1 -1.9,1.1 -1,-1 1.1,-1.9zM164.7,105.3l1,-1 1.9,1.1 1.9,-1.1 1,1 -1.1,1.9 1.1,1.9 -1,1 -1.9,-1.1 -1.9,1.1 -1,-1 1.1,-1.9zM167.7,103.8l1,-1 1.9,1.1 1.9,-1.1 1,1 -1.1,1.9 1.1,1.9 -1,1 -1.9,-1.1 -1.9,1.1 -1,-1 1.1,-1.9zM175.4,102.3l1,-1 1.9,1.1 1.9,-1.1 1,1 -1.1,1.9 1.1,1.9 -1,1 -1.9,-1.1 -1.9,1.1 -1,-1 1.1,-1.9zM174.3,104.8l1,-1 1.9,1.1 1.9,-1.1 1,1 -1.1,1.9 1.1,1.9 -1,1 -1.9,-1.1 -1.9,1.1 -1,-1 1.1,-1.9zM176.9,106.4l1,-1 1.9,1.1 1.9,-1.1 1,1 -1.1,1.9 1.1,1.9 -1,1 -1.9,-1.1 -1.9,1.1 -1,-1 1.1,-1.9zM175.9,108.9l1,-1 1.9,1.1 1.9,-1.1 1,1 -1.1,1.9 1.1,1.9 -1,1 -1.9,-1.1 -1.9,1.1 -1,-1 1.1,-1.9zM151.4,111.5l1,-1 1.9,1.1 1.9,-1.1 1,1 -1.1,1.9 1.1,1.9 -1,1 -1.9,-1.1 -1.9,1.1 -1,-1 1.1,-1.9zM144.0,121.1l1,-1 1.9,1.1 1.9,-1.1 1,1 -1.1,1.9 1.1,1.9 -1,1 -1.9,-1.1 -1.9,1.1 -1,-1 1.1,-1.9zM142.1,121.1l1,-1 1.9,1.1 1.9,-1.1 1,1 -1.1,1.9 1.1,1.9 -1,1 -1.9,-1.1 -1.9,1.1 -1,-1 1.1,-1.9zM150.0,122.3l1,-1 1.9,1.1 1.9,-1.1 1,1 -1.1,1.9 1.1,1.9 -1,1 -1.9,-1.1 -1.9,1.1 -1,-1 1.1,-1.9zM188.1,80.6l1,-1 1.9,1.1 1.9,-1.1 1,1 -1.1,1.9 1.1,1.9 -1,1 -1.9,-1.1 -1.9,1.1 -1,-1 1.1,-1.9zM191.6,80.6l1,-1 1.9,1.1 1.9,-1.1 1,1 -1.1,1.9 1.1,1.9 -1,1 -1.9,-1.1 -1.9,1.1 -1,-1 1.1,-1.9zM193.4,82.1l1,-1 1.9,1.1 1.9,-1.1 1,1 -1.1,1.9 1.1,1.9 -1,1 -1.9,-1.1 -1.9,1.1 -1,-1 1.1,-1.9zM190.1,83.1l1,-1 1.9,1.1 1.9,-1.1 1,1 -1.1,1.9 1.1,1.9 -1,1 -1.9,-1.1 -1.9,1.1 -1,-1 1.1,-1.9zM187.1,83.6l1,-1 1.9,1.1 1.9,-1.1 1,1 -1.1,1.9 1.1,1.9 -1,1 -1.9,-1.1 -1.9,1.1 -1,-1 1.1,-1.9zM185.1,84.6l1,-1 1.9,1.1 1.9,-1.1 1,1 -1.1,1.9 1.1,1.9 -1,1 -1.9,-1.1 -1.9,1.1 -1,-1 1.1,-1.9zM192.1,84.6l1,-1 1.9,1.1 1.9,-1.1 1,1 -1.1,1.9 1.1,1.9 -1,1 -1.9,-1.1 -1.9,1.1 -1,-1 1.1,-1.9zM184.1,89.6l1,-1 1.9,1.1 1.9,-1.1 1,1 -1.1,1.9 1.1,1.9 -1,1 -1.9,-1.1 -1.9,1.1 -1,-1 1.1,-1.9zM266.6,24.7l1,-1 1.9,1.1 1.9,-1.1 1,1 -1.1,1.9 1.1,1.9 -1,1 -1.9,-1.1 -1.9,1.1 -1,-1 1.1,-1.9zM270.1,25.1l1,-1 1.9,1.1 1.9,-1.1 1,1 -1.1,1.9 1.1,1.9 -1,1 -1.9,-1.1 -1.9,1.1 -1,-1 1.1,-1.9zM326.7,35.3l1,-1 1.9,1.1 1.9,-1.1 1,1 -1.1,1.9 1.1,1.9 -1,1 -1.9,-1.1 -1.9,1.1 -1,-1 1.1,-1.9zM330.3,38.4l1,-1 1.9,1.1 1.9,-1.1 1,1 -1.1,1.9 1.1,1.9 -1,1 -1.9,-1.1 -1.9,1.1 -1,-1 1.1,-1.9zM327.3,40.2l1,-1 1.9,1.1 1.9,-1.1 1,1 -1.1,1.9 1.1,1.9 -1,1 -1.9,-1.1 -1.9,1.1 -1,-1 1.1,-1.9zM323.6,39.0l1,-1 1.9,1.1 1.9,-1.1 1,1 -1.1,1.9 1.1,1.9 -1,1 -1.9,-1.1 -1.9,1.1 -1,-1 1.1,-1.9zM319.9,42.7l1,-1 1.9,1.1 1.9,-1.1 1,1 -1.1,1.9 1.1,1.9 -1,1 -1.9,-1.1 -1.9,1.1 -1,-1 1.1,-1.9zM318.1,45.1l1,-1 1.9,1.1 1.9,-1.1 1,1 -1.1,1.9 1.1,1.9 -1,1 -1.9,-1.1 -1.9,1.1 -1,-1 1.1,-1.9zM319.9,48.2l1,-1 1.9,1.1 1.9,-1.1 1,1 -1.1,1.9 1.1,1.9 -1,1 -1.9,-1.1 -1.9,1.1 -1,-1 1.1,-1.9zM323.6,48.8l1,-1 1.9,1.1 1.9,-1.1 1,1 -1.1,1.9 1.1,1.9 -1,1 -1.9,-1.1 -1.9,1.1 -1,-1 1.1,-1.9zM322.1,45.1l1,-1 1.9,1.1 1.9,-1.1 1,1 -1.1,1.9 1.1,1.9 -1,1 -1.9,-1.1 -1.9,1.1 -1,-1 1.1,-1.9zM317.5,52.4l1,-1 1.9,1.1 1.9,-1.1 1,1 -1.1,1.9 1.1,1.9 -1,1 -1.9,-1.1 -1.9,1.1 -1,-1 1.1,-1.9zM325.1,37.6l1,-1 1.9,1.1 1.9,-1.1 1,1 -1.1,1.9 1.1,1.9 -1,1 -1.9,-1.1 -1.9,1.1 -1,-1 1.1,-1.9zM294.0,50.5l1,-1 1.9,1.1 1.9,-1.1 1,1 -1.1,1.9 1.1,1.9 -1,1 -1.9,-1.1 -1.9,1.1 -1,-1 1.1,-1.9zM292.0,54.1l1,-1 1.9,1.1 1.9,-1.1 1,1 -1.1,1.9 1.1,1.9 -1,1 -1.9,-1.1 -1.9,1.1 -1,-1 1.1,-1.9zM291.4,57.6l1,-1 1.9,1.1 1.9,-1.1 1,1 -1.1,1.9 1.1,1.9 -1,1 -1.9,-1.1 -1.9,1.1 -1,-1 1.1,-1.9zM291.4,60.2l1,-1 1.9,1.1 1.9,-1.1 1,1 -1.1,1.9 1.1,1.9 -1,1 -1.9,-1.1 -1.9,1.1 -1,-1 1.1,-1.9zM295.5,56.1l1,-1 1.9,1.1 1.9,-1.1 1,1 -1.1,1.9 1.1,1.9 -1,1 -1.9,-1.1 -1.9,1.1 -1,-1 1.1,-1.9zM298.1,58.6l1,-1 1.9,1.1 1.9,-1.1 1,1 -1.1,1.9 1.1,1.9 -1,1 -1.9,-1.1 -1.9,1.1 -1,-1 1.1,-1.9zM300.1,60.7l1,-1 1.9,1.1 1.9,-1.1 1,1 -1.1,1.9 1.1,1.9 -1,1 -1.9,-1.1 -1.9,1.1 -1,-1 1.1,-1.9zM358.4,49.4l1,-1 1.9,1.1 1.9,-1.1 1,1 -1.1,1.9 1.1,1.9 -1,1 -1.9,-1.1 -1.9,1.1 -1,-1 1.1,-1.9zM360.8,50.0l1,-1 1.9,1.1 1.9,-1.1 1,1 -1.1,1.9 1.1,1.9 -1,1 -1.9,-1.1 -1.9,1.1 -1,-1 1.1,-1.9zM362.4,60.4l1,-1 1.9,1.1 1.9,-1.1 1,1 -1.1,1.9 1.1,1.9 -1,1 -1.9,-1.1 -1.9,1.1 -1,-1 1.1,-1.9zM401.8,46.2l1,-1 1.9,1.1 1.9,-1.1 1,1 -1.1,1.9 1.1,1.9 -1,1 -1.9,-1.1 -1.9,1.1 -1,-1 1.1,-1.9zM298.6,71.9l1,-1 1.9,1.1 1.9,-1.1 1,1 -1.1,1.9 1.1,1.9 -1,1 -1.9,-1.1 -1.9,1.1 -1,-1 1.1,-1.9zM309.8,79.9l1,-1 1.9,1.1 1.9,-1.1 1,1 -1.1,1.9 1.1,1.9 -1,1 -1.9,-1.1 -1.9,1.1 -1,-1 1.1,-1.9zM317.4,79.9l1,-1 1.9,1.1 1.9,-1.1 1,1 -1.1,1.9 1.1,1.9 -1,1 -1.9,-1.1 -1.9,1.1 -1,-1 1.1,-1.9zM331.1,83.6l1,-1 1.9,1.1 1.9,-1.1 1,1 -1.1,1.9 1.1,1.9 -1,1 -1.9,-1.1 -1.9,1.1 -1,-1 1.1,-1.9zM336.2,85.1l1,-1 1.9,1.1 1.9,-1.1 1,1 -1.1,1.9 1.1,1.9 -1,1 -1.9,-1.1 -1.9,1.1 -1,-1 1.1,-1.9zM345.4,84.1l1,-1 1.9,1.1 1.9,-1.1 1,1 -1.1,1.9 1.1,1.9 -1,1 -1.9,-1.1 -1.9,1.1 -1,-1 1.1,-1.9zM300.6,87.4l1,-1 1.9,1.1 1.9,-1.1 1,1 -1.1,1.9 1.1,1.9 -1,1 -1.9,-1.1 -1.9,1.1 -1,-1 1.1,-1.9zM289.3,98.1l1,-1 1.9,1.1 1.9,-1.1 1,1 -1.1,1.9 1.1,1.9 -1,1 -1.9,-1.1 -1.9,1.1 -1,-1 1.1,-1.9zM290.6,99.1l1,-1 1.9,1.1 1.9,-1.1 1,1 -1.1,1.9 1.1,1.9 -1,1 -1.9,-1.1 -1.9,1.1 -1,-1 1.1,-1.9zM323.3,94.3l1,-1 1.9,1.1 1.9,-1.1 1,1 -1.1,1.9 1.1,1.9 -1,1 -1.9,-1.1 -1.9,1.1 -1,-1 1.1,-1.9zM329.7,97.5l1,-1 1.9,1.1 1.9,-1.1 1,1 -1.1,1.9 1.1,1.9 -1,1 -1.9,-1.1 -1.9,1.1 -1,-1 1.1,-1.9zM355.0,100.9l1,-1 1.9,1.1 1.9,-1.1 1,1 -1.1,1.9 1.1,1.9 -1,1 -1.9,-1.1 -1.9,1.1 -1,-1 1.1,-1.9zM352.6,102.6l1,-1 1.9,1.1 1.9,-1.1 1,1 -1.1,1.9 1.1,1.9 -1,1 -1.9,-1.1 -1.9,1.1 -1,-1 1.1,-1.9zM349.4,104.7l1,-1 1.9,1.1 1.9,-1.1 1,1 -1.1,1.9 1.1,1.9 -1,1 -1.9,-1.1 -1.9,1.1 -1,-1 1.1,-1.9zM343.5,112.3l1,-1 1.9,1.1 1.9,-1.1 1,1 -1.1,1.9 1.1,1.9 -1,1 -1.9,-1.1 -1.9,1.1 -1,-1 1.1,-1.9zM374.8,106.5l1,-1 1.9,1.1 1.9,-1.1 1,1 -1.1,1.9 1.1,1.9 -1,1 -1.9,-1.1 -1.9,1.1 -1,-1 1.1,-1.9zM379.9,112.8l1,-1 1.9,1.1 1.9,-1.1 1,1 -1.1,1.9 1.1,1.9 -1,1 -1.9,-1.1 -1.9,1.1 -1,-1 1.1,-1.9zM379.1,110.6l1,-1 1.9,1.1 1.9,-1.1 1,1 -1.1,1.9 1.1,1.9 -1,1 -1.9,-1.1 -1.9,1.1 -1,-1 1.1,-1.9zM423.6,133.2l1,-1 1.9,1.1 1.9,-1.1 1,1 -1.1,1.9 1.1,1.9 -1,1 -1.9,-1.1 -1.9,1.1 -1,-1 1.1,-1.9zM456.4,120.1l1,-1 1.9,1.1 1.9,-1.1 1,1 -1.1,1.9 1.1,1.9 -1,1 -1.9,-1.1 -1.9,1.1 -1,-1 1.1,-1.9zM458.9,120.3l1,-1 1.9,1.1 1.9,-1.1 1,1 -1.1,1.9 1.1,1.9 -1,1 -1.9,-1.1 -1.9,1.1 -1,-1 1.1,-1.9zM454.2,132.4l1,-1 1.9,1.1 1.9,-1.1 1,1 -1.1,1.9 1.1,1.9 -1,1 -1.9,-1.1 -1.9,1.1 -1,-1 1.1,-1.9zM456.5,132.7l1,-1 1.9,1.1 1.9,-1.1 1,1 -1.1,1.9 1.1,1.9 -1,1 -1.9,-1.1 -1.9,1.1 -1,-1 1.1,-1.9zM464.3,136.7l1,-1 1.9,1.1 1.9,-1.1 1,1 -1.1,1.9 1.1,1.9 -1,1 -1.9,-1.1 -1.9,1.1 -1,-1 1.1,-1.9zM486.4,130.8l1,-1 1.9,1.1 1.9,-1.1 1,1 -1.1,1.9 1.1,1.9 -1,1 -1.9,-1.1 -1.9,1.1 -1,-1 1.1,-1.9zM464.6,162.9l1,-1 1.9,1.1 1.9,-1.1 1,1 -1.1,1.9 1.1,1.9 -1,1 -1.9,-1.1 -1.9,1.1 -1,-1 1.1,-1.9zM486.7,88.9l1,-1 1.9,1.1 1.9,-1.1 1,1 -1.1,1.9 1.1,1.9 -1,1 -1.9,-1.1 -1.9,1.1 -1,-1 1.1,-1.9zM527.9,190.1l1,-1 1.9,1.1 1.9,-1.1 1,1 -1.1,1.9 1.1,1.9 -1,1 -1.9,-1.1 -1.9,1.1 -1,-1 1.1,-1.9zM533.4,196.2l1,-1 1.9,1.1 1.9,-1.1 1,1 -1.1,1.9 1.1,1.9 -1,1 -1.9,-1.1 -1.9,1.1 -1,-1 1.1,-1.9zM535.2,196.8l1,-1 1.9,1.1 1.9,-1.1 1,1 -1.1,1.9 1.1,1.9 -1,1 -1.9,-1.1 -1.9,1.1 -1,-1 1.1,-1.9zM533.4,206.6l1,-1 1.9,1.1 1.9,-1.1 1,1 -1.1,1.9 1.1,1.9 -1,1 -1.9,-1.1 -1.9,1.1 -1,-1 1.1,-1.9zM513.6,210.5l1,-1 1.9,1.1 1.9,-1.1 1,1 -1.1,1.9 1.1,1.9 -1,1 -1.9,-1.1 -1.9,1.1 -1,-1 1.1,-1.9zM525.4,211.4l1,-1 1.9,1.1 1.9,-1.1 1,1 -1.1,1.9 1.1,1.9 -1,1 -1.9,-1.1 -1.9,1.1 -1,-1 1.1,-1.9zM524.2,214.5l1,-1 1.9,1.1 1.9,-1.1 1,1 -1.1,1.9 1.1,1.9 -1,1 -1.9,-1.1 -1.9,1.1 -1,-1 1.1,-1.9zM523.0,216.3l1,-1 1.9,1.1 1.9,-1.1 1,1 -1.1,1.9 1.1,1.9 -1,1 -1.9,-1.1 -1.9,1.1 -1,-1 1.1,-1.9zM526.7,226.1l1,-1 1.9,1.1 1.9,-1.1 1,1 -1.1,1.9 1.1,1.9 -1,1 -1.9,-1.1 -1.9,1.1 -1,-1 1.1,-1.9zM568.2,211.4l1,-1 1.9,1.1 1.9,-1.1 1,1 -1.1,1.9 1.1,1.9 -1,1 -1.9,-1.1 -1.9,1.1 -1,-1 1.1,-1.9zM568.2,213.9l1,-1 1.9,1.1 1.9,-1.1 1,1 -1.1,1.9 1.1,1.9 -1,1 -1.9,-1.1 -1.9,1.1 -1,-1 1.1,-1.9zM569.4,221.2l1,-1 1.9,1.1 1.9,-1.1 1,1 -1.1,1.9 1.1,1.9 -1,1 -1.9,-1.1 -1.9,1.1 -1,-1 1.1,-1.9zM565.1,227.3l1,-1 1.9,1.1 1.9,-1.1 1,1 -1.1,1.9 1.1,1.9 -1,1 -1.9,-1.1 -1.9,1.1 -1,-1 1.1,-1.9zM523.9,212.7l1,-1 1.9,1.1 1.9,-1.1 1,1 -1.1,1.9 1.1,1.9 -1,1 -1.9,-1.1 -1.9,1.1 -1,-1 1.1,-1.9zM525.6,213.7l1,-1 1.9,1.1 1.9,-1.1 1,1 -1.1,1.9 1.1,1.9 -1,1 -1.9,-1.1 -1.9,1.1 -1,-1 1.1,-1.9zM527.1,210.6l1,-1 1.9,1.1 1.9,-1.1 1,1 -1.1,1.9 1.1,1.9 -1,1 -1.9,-1.1 -1.9,1.1 -1,-1 1.1,-1.9zM534.4,195.1l1,-1 1.9,1.1 1.9,-1.1 1,1 -1.1,1.9 1.1,1.9 -1,1 -1.9,-1.1 -1.9,1.1 -1,-1 1.1,-1.9zM465.8,162.6l1,-1 1.9,1.1 1.9,-1.1 1,1 -1.1,1.9 1.1,1.9 -1,1 -1.9,-1.1 -1.9,1.1 -1,-1 1.1,-1.9zM323.2,189.6l1,-1 1.9,1.1 1.9,-1.1 1,1 -1.1,1.9 1.1,1.9 -1,1 -1.9,-1.1 -1.9,1.1 -1,-1 1.1,-1.9zM345.2,191.7l1,-1 1.9,1.1 1.9,-1.1 1,1 -1.1,1.9 1.1,1.9 -1,1 -1.9,-1.1 -1.9,1.1 -1,-1 1.1,-1.9zM344.0,194.7l1,-1 1.9,1.1 1.9,-1.1 1,1 -1.1,1.9 1.1,1.9 -1,1 -1.9,-1.1 -1.9,1.1 -1,-1 1.1,-1.9zM339.7,196.6l1,-1 1.9,1.1 1.9,-1.1 1,1 -1.1,1.9 1.1,1.9 -1,1 -1.9,-1.1 -1.9,1.1 -1,-1 1.1,-1.9zM343.4,197.8l1,-1 1.9,1.1 1.9,-1.1 1,1 -1.1,1.9 1.1,1.9 -1,1 -1.9,-1.1 -1.9,1.1 -1,-1 1.1,-1.9zM345.8,199.6l1,-1 1.9,1.1 1.9,-1.1 1,1 -1.1,1.9 1.1,1.9 -1,1 -1.9,-1.1 -1.9,1.1 -1,-1 1.1,-1.9zM347.0,201.4l1,-1 1.9,1.1 1.9,-1.1 1,1 -1.1,1.9 1.1,1.9 -1,1 -1.9,-1.1 -1.9,1.1 -1,-1 1.1,-1.9zM342.1,193.1l1,-1 1.9,1.1 1.9,-1.1 1,1 -1.1,1.9 1.1,1.9 -1,1 -1.9,-1.1 -1.9,1.1 -1,-1 1.1,-1.9zM344.6,196.4l1,-1 1.9,1.1 1.9,-1.1 1,1 -1.1,1.9 1.1,1.9 -1,1 -1.9,-1.1 -1.9,1.1 -1,-1 1.1,-1.9zM329.3,208.8l1,-1 1.9,1.1 1.9,-1.1 1,1 -1.1,1.9 1.1,1.9 -1,1 -1.9,-1.1 -1.9,1.1 -1,-1 1.1,-1.9zM331.8,208.8l1,-1 1.9,1.1 1.9,-1.1 1,1 -1.1,1.9 1.1,1.9 -1,1 -1.9,-1.1 -1.9,1.1 -1,-1 1.1,-1.9zM334.2,208.8l1,-1 1.9,1.1 1.9,-1.1 1,1 -1.1,1.9 1.1,1.9 -1,1 -1.9,-1.1 -1.9,1.1 -1,-1 1.1,-1.9zM340.6,208.5l1,-1 1.9,1.1 1.9,-1.1 1,1 -1.1,1.9 1.1,1.9 -1,1 -1.9,-1.1 -1.9,1.1 -1,-1 1.1,-1.9zM386.4,186.4l1,-1 1.9,1.1 1.9,-1.1 1,1 -1.1,1.9 1.1,1.9 -1,1 -1.9,-1.1 -1.9,1.1 -1,-1 1.1,-1.9zM208.7,223.4l1,-1 1.9,1.1 1.9,-1.1 1,1 -1.1,1.9 1.1,1.9 -1,1 -1.9,-1.1 -1.9,1.1 -1,-1 1.1,-1.9zM308.1,55.7l1,-1 1.9,1.1 1.9,-1.1 1,1 -1.1,1.9 1.1,1.9 -1,1 -1.9,-1.1 -1.9,1.1 -1,-1 1.1,-1.9zM310.8,55.7l1,-1 1.9,1.1 1.9,-1.1 1,1 -1.1,1.9 1.1,1.9 -1,1 -1.9,-1.1 -1.9,1.1 -1,-1 1.1,-1.9zM313.8,55.1l1,-1 1.9,1.1 1.9,-1.1 1,1 -1.1,1.9 1.1,1.9 -1,1 -1.9,-1.1 -1.9,1.1 -1,-1 1.1,-1.9zM315.6,56.0l1,-1 1.9,1.1 1.9,-1.1 1,1 -1.1,1.9 1.1,1.9 -1,1 -1.9,-1.1 -1.9,1.1 -1,-1 1.1,-1.9zM318.5,55.3l1,-1 1.9,1.1 1.9,-1.1 1,1 -1.1,1.9 1.1,1.9 -1,1 -1.9,-1.1 -1.9,1.1 -1,-1 1.1,-1.9zM303.8,58.2l1,-1 1.9,1.1 1.9,-1.1 1,1 -1.1,1.9 1.1,1.9 -1,1 -1.9,-1.1 -1.9,1.1 -1,-1 1.1,-1.9zM306.2,58.2l1,-1 1.9,1.1 1.9,-1.1 1,1 -1.1,1.9 1.1,1.9 -1,1 -1.9,-1.1 -1.9,1.1 -1,-1 1.1,-1.9zM308.6,57.8l1,-1 1.9,1.1 1.9,-1.1 1,1 -1.1,1.9 1.1,1.9 -1,1 -1.9,-1.1 -1.9,1.1 -1,-1 1.1,-1.9zM311.2,58.6l1,-1 1.9,1.1 1.9,-1.1 1,1 -1.1,1.9 1.1,1.9 -1,1 -1.9,-1.1 -1.9,1.1 -1,-1 1.1,-1.9zM313.6,58.5l1,-1 1.9,1.1 1.9,-1.1 1,1 -1.1,1.9 1.1,1.9 -1,1 -1.9,-1.1 -1.9,1.1 -1,-1 1.1,-1.9zM316.4,57.7l1,-1 1.9,1.1 1.9,-1.1 1,1 -1.1,1.9 1.1,1.9 -1,1 -1.9,-1.1 -1.9,1.1 -1,-1 1.1,-1.9zM319.1,58.3l1,-1 1.9,1.1 1.9,-1.1 1,1 -1.1,1.9 1.1,1.9 -1,1 -1.9,-1.1 -1.9,1.1 -1,-1 1.1,-1.9zM300.4,60.2l1,-1 1.9,1.1 1.9,-1.1 1,1 -1.1,1.9 1.1,1.9 -1,1 -1.9,-1.1 -1.9,1.1 -1,-1 1.1,-1.9zM303.6,60.8l1,-1 1.9,1.1 1.9,-1.1 1,1 -1.1,1.9 1.1,1.9 -1,1 -1.9,-1.1 -1.9,1.1 -1,-1 1.1,-1.9zM306.1,61.3l1,-1 1.9,1.1 1.9,-1.1 1,1 -1.1,1.9 1.1,1.9 -1,1 -1.9,-1.1 -1.9,1.1 -1,-1 1.1,-1.9zM308.7,61.3l1,-1 1.9,1.1 1.9,-1.1 1,1 -1.1,1.9 1.1,1.9 -1,1 -1.9,-1.1 -1.9,1.1 -1,-1 1.1,-1.9zM310.9,61.2l1,-1 1.9,1.1 1.9,-1.1 1,1 -1.1,1.9 1.1,1.9 -1,1 -1.9,-1.1 -1.9,1.1 -1,-1 1.1,-1.9zM313.5,61.3l1,-1 1.9,1.1 1.9,-1.1 1,1 -1.1,1.9 1.1,1.9 -1,1 -1.9,-1.1 -1.9,1.1 -1,-1 1.1,-1.9zM316.7,60.3l1,-1 1.9,1.1 1.9,-1.1 1,1 -1.1,1.9 1.1,1.9 -1,1 -1.9,-1.1 -1.9,1.1 -1,-1 1.1,-1.9zM318.4,60.5l1,-1 1.9,1.1 1.9,-1.1 1,1 -1.1,1.9 1.1,1.9 -1,1 -1.9,-1.1 -1.9,1.1 -1,-1 1.1,-1.9zM298.6,63.3l1,-1 1.9,1.1 1.9,-1.1 1,1 -1.1,1.9 1.1,1.9 -1,1 -1.9,-1.1 -1.9,1.1 -1,-1 1.1,-1.9zM300.8,63.2l1,-1 1.9,1.1 1.9,-1.1 1,1 -1.1,1.9 1.1,1.9 -1,1 -1.9,-1.1 -1.9,1.1 -1,-1 1.1,-1.9zM303.2,63.3l1,-1 1.9,1.1 1.9,-1.1 1,1 -1.1,1.9 1.1,1.9 -1,1 -1.9,-1.1 -1.9,1.1 -1,-1 1.1,-1.9zM305.6,63.5l1,-1 1.9,1.1 1.9,-1.1 1,1 -1.1,1.9 1.1,1.9 -1,1 -1.9,-1.1 -1.9,1.1 -1,-1 1.1,-1.9zM308.5,63.9l1,-1 1.9,1.1 1.9,-1.1 1,1 -1.1,1.9 1.1,1.9 -1,1 -1.9,-1.1 -1.9,1.1 -1,-1 1.1,-1.9zM311.2,63.9l1,-1 1.9,1.1 1.9,-1.1 1,1 -1.1,1.9 1.1,1.9 -1,1 -1.9,-1.1 -1.9,1.1 -1,-1 1.1,-1.9zM314.0,64.0l1,-1 1.9,1.1 1.9,-1.1 1,1 -1.1,1.9 1.1,1.9 -1,1 -1.9,-1.1 -1.9,1.1 -1,-1 1.1,-1.9zM316.4,63.0l1,-1 1.9,1.1 1.9,-1.1 1,1 -1.1,1.9 1.1,1.9 -1,1 -1.9,-1.1 -1.9,1.1 -1,-1 1.1,-1.9zM319.2,64.0l1,-1 1.9,1.1 1.9,-1.1 1,1 -1.1,1.9 1.1,1.9 -1,1 -1.9,-1.1 -1.9,1.1 -1,-1 1.1,-1.9zM298.5,66.1l1,-1 1.9,1.1 1.9,-1.1 1,1 -1.1,1.9 1.1,1.9 -1,1 -1.9,-1.1 -1.9,1.1 -1,-1 1.1,-1.9zM300.9,65.7l1,-1 1.9,1.1 1.9,-1.1 1,1 -1.1,1.9 1.1,1.9 -1,1 -1.9,-1.1 -1.9,1.1 -1,-1 1.1,-1.9zM303.6,66.1l1,-1 1.9,1.1 1.9,-1.1 1,1 -1.1,1.9 1.1,1.9 -1,1 -1.9,-1.1 -1.9,1.1 -1,-1 1.1,-1.9zM305.5,65.5l1,-1 1.9,1.1 1.9,-1.1 1,1 -1.1,1.9 1.1,1.9 -1,1 -1.9,-1.1 -1.9,1.1 -1,-1 1.1,-1.9zM308.8,66.6l1,-1 1.9,1.1 1.9,-1.1 1,1 -1.1,1.9 1.1,1.9 -1,1 -1.9,-1.1 -1.9,1.1 -1,-1 1.1,-1.9zM310.5,66.4l1,-1 1.9,1.1 1.9,-1.1 1,1 -1.1,1.9 1.1,1.9 -1,1 -1.9,-1.1 -1.9,1.1 -1,-1 1.1,-1.9zM313.5,65.6l1,-1 1.9,1.1 1.9,-1.1 1,1 -1.1,1.9 1.1,1.9 -1,1 -1.9,-1.1 -1.9,1.1 -1,-1 1.1,-1.9zM316.0,66.3l1,-1 1.9,1.1 1.9,-1.1 1,1 -1.1,1.9 1.1,1.9 -1,1 -1.9,-1.1 -1.9,1.1 -1,-1 1.1,-1.9zM319.2,65.5l1,-1 1.9,1.1 1.9,-1.1 1,1 -1.1,1.9 1.1,1.9 -1,1 -1.9,-1.1 -1.9,1.1 -1,-1 1.1,-1.9zM311.1,68.1l1,-1 1.9,1.1 1.9,-1.1 1,1 -1.1,1.9 1.1,1.9 -1,1 -1.9,-1.1 -1.9,1.1 -1,-1 1.1,-1.9zM313.9,68.4l1,-1 1.9,1.1 1.9,-1.1 1,1 -1.1,1.9 1.1,1.9 -1,1 -1.9,-1.1 -1.9,1.1 -1,-1 1.1,-1.9zM316.7,69.2l1,-1 1.9,1.1 1.9,-1.1 1,1 -1.1,1.9 1.1,1.9 -1,1 -1.9,-1.1 -1.9,1.1 -1,-1 1.1,-1.9zM318.8,69.2l1,-1 1.9,1.1 1.9,-1.1 1,1 -1.1,1.9 1.1,1.9 -1,1 -1.9,-1.1 -1.9,1.1 -1,-1 1.1,-1.9zM310.8,70.7l1,-1 1.9,1.1 1.9,-1.1 1,1 -1.1,1.9 1.1,1.9 -1,1 -1.9,-1.1 -1.9,1.1 -1,-1 1.1,-1.9zM313.7,70.6l1,-1 1.9,1.1 1.9,-1.1 1,1 -1.1,1.9 1.1,1.9 -1,1 -1.9,-1.1 -1.9,1.1 -1,-1 1.1,-1.9zM315.8,71.1l1,-1 1.9,1.1 1.9,-1.1 1,1 -1.1,1.9 1.1,1.9 -1,1 -1.9,-1.1 -1.9,1.1 -1,-1 1.1,-1.9zM318.9,70.8l1,-1 1.9,1.1 1.9,-1.1 1,1 -1.1,1.9 1.1,1.9 -1,1 -1.9,-1.1 -1.9,1.1 -1,-1 1.1,-1.9zM323.0,61.6l1,-1 1.9,1.1 1.9,-1.1 1,1 -1.1,1.9 1.1,1.9 -1,1 -1.9,-1.1 -1.9,1.1 -1,-1 1.1,-1.9zM325.9,61.8l1,-1 1.9,1.1 1.9,-1.1 1,1 -1.1,1.9 1.1,1.9 -1,1 -1.9,-1.1 -1.9,1.1 -1,-1 1.1,-1.9zM329.2,61.1l1,-1 1.9,1.1 1.9,-1.1 1,1 -1.1,1.9 1.1,1.9 -1,1 -1.9,-1.1 -1.9,1.1 -1,-1 1.1,-1.9zM323.5,63.8l1,-1 1.9,1.1 1.9,-1.1 1,1 -1.1,1.9 1.1,1.9 -1,1 -1.9,-1.1 -1.9,1.1 -1,-1 1.1,-1.9zM326.3,63.9l1,-1 1.9,1.1 1.9,-1.1 1,1 -1.1,1.9 1.1,1.9 -1,1 -1.9,-1.1 -1.9,1.1 -1,-1 1.1,-1.9zM328.8,63.9l1,-1 1.9,1.1 1.9,-1.1 1,1 -1.1,1.9 1.1,1.9 -1,1 -1.9,-1.1 -1.9,1.1 -1,-1 1.1,-1.9zM331.8,63.8l1,-1 1.9,1.1 1.9,-1.1 1,1 -1.1,1.9 1.1,1.9 -1,1 -1.9,-1.1 -1.9,1.1 -1,-1 1.1,-1.9zM323.4,66.7l1,-1 1.9,1.1 1.9,-1.1 1,1 -1.1,1.9 1.1,1.9 -1,1 -1.9,-1.1 -1.9,1.1 -1,-1 1.1,-1.9zM325.8,66.2l1,-1 1.9,1.1 1.9,-1.1 1,1 -1.1,1.9 1.1,1.9 -1,1 -1.9,-1.1 -1.9,1.1 -1,-1 1.1,-1.9zM329.3,66.4l1,-1 1.9,1.1 1.9,-1.1 1,1 -1.1,1.9 1.1,1.9 -1,1 -1.9,-1.1 -1.9,1.1 -1,-1 1.1,-1.9zM331.4,65.8l1,-1 1.9,1.1 1.9,-1.1 1,1 -1.1,1.9 1.1,1.9 -1,1 -1.9,-1.1 -1.9,1.1 -1,-1 1.1,-1.9zM333.8,66.5l1,-1 1.9,1.1 1.9,-1.1 1,1 -1.1,1.9 1.1,1.9 -1,1 -1.9,-1.1 -1.9,1.1 -1,-1 1.1,-1.9zM335.9,66.5l1,-1 1.9,1.1 1.9,-1.1 1,1 -1.1,1.9 1.1,1.9 -1,1 -1.9,-1.1 -1.9,1.1 -1,-1 1.1,-1.9zM323.7,68.5l1,-1 1.9,1.1 1.9,-1.1 1,1 -1.1,1.9 1.1,1.9 -1,1 -1.9,-1.1 -1.9,1.1 -1,-1 1.1,-1.9zM326.3,69.0l1,-1 1.9,1.1 1.9,-1.1 1,1 -1.1,1.9 1.1,1.9 -1,1 -1.9,-1.1 -1.9,1.1 -1,-1 1.1,-1.9zM328.9,68.8l1,-1 1.9,1.1 1.9,-1.1 1,1 -1.1,1.9 1.1,1.9 -1,1 -1.9,-1.1 -1.9,1.1 -1,-1 1.1,-1.9zM331.5,69.3l1,-1 1.9,1.1 1.9,-1.1 1,1 -1.1,1.9 1.1,1.9 -1,1 -1.9,-1.1 -1.9,1.1 -1,-1 1.1,-1.9zM333.3,68.5l1,-1 1.9,1.1 1.9,-1.1 1,1 -1.1,1.9 1.1,1.9 -1,1 -1.9,-1.1 -1.9,1.1 -1,-1 1.1,-1.9zM336.7,69.6l1,-1 1.9,1.1 1.9,-1.1 1,1 -1.1,1.9 1.1,1.9 -1,1 -1.9,-1.1 -1.9,1.1 -1,-1 1.1,-1.9zM338.8,68.9l1,-1 1.9,1.1 1.9,-1.1 1,1 -1.1,1.9 1.1,1.9 -1,1 -1.9,-1.1 -1.9,1.1 -1,-1 1.1,-1.9zM341.8,68.8l1,-1 1.9,1.1 1.9,-1.1 1,1 -1.1,1.9 1.1,1.9 -1,1 -1.9,-1.1 -1.9,1.1 -1,-1 1.1,-1.9zM344.1,68.8l1,-1 1.9,1.1 1.9,-1.1 1,1 -1.1,1.9 1.1,1.9 -1,1 -1.9,-1.1 -1.9,1.1 -1,-1 1.1,-1.9zM323.3,71.7l1,-1 1.9,1.1 1.9,-1.1 1,1 -1.1,1.9 1.1,1.9 -1,1 -1.9,-1.1 -1.9,1.1 -1,-1 1.1,-1.9zM325.9,71.5l1,-1 1.9,1.1 1.9,-1.1 1,1 -1.1,1.9 1.1,1.9 -1,1 -1.9,-1.1 -1.9,1.1 -1,-1 1.1,-1.9zM329.0,71.0l1,-1 1.9,1.1 1.9,-1.1 1,1 -1.1,1.9 1.1,1.9 -1,1 -1.9,-1.1 -1.9,1.1 -1,-1 1.1,-1.9zM331.4,71.9l1,-1 1.9,1.1 1.9,-1.1 1,1 -1.1,1.9 1.1,1.9 -1,1 -1.9,-1.1 -1.9,1.1 -1,-1 1.1,-1.9zM333.7,71.3l1,-1 1.9,1.1 1.9,-1.1 1,1 -1.1,1.9 1.1,1.9 -1,1 -1.9,-1.1 -1.9,1.1 -1,-1 1.1,-1.9zM336.9,71.3l1,-1 1.9,1.1 1.9,-1.1 1,1 -1.1,1.9 1.1,1.9 -1,1 -1.9,-1.1 -1.9,1.1 -1,-1 1.1,-1.9zM338.7,71.5l1,-1 1.9,1.1 1.9,-1.1 1,1 -1.1,1.9 1.1,1.9 -1,1 -1.9,-1.1 -1.9,1.1 -1,-1 1.1,-1.9zM341.9,71.1l1,-1 1.9,1.1 1.9,-1.1 1,1 -1.1,1.9 1.1,1.9 -1,1 -1.9,-1.1 -1.9,1.1 -1,-1 1.1,-1.9zM344.1,71.4l1,-1 1.9,1.1 1.9,-1.1 1,1 -1.1,1.9 1.1,1.9 -1,1 -1.9,-1.1 -1.9,1.1 -1,-1 1.1,-1.9zM331.7,74.1l1,-1 1.9,1.1 1.9,-1.1 1,1 -1.1,1.9 1.1,1.9 -1,1 -1.9,-1.1 -1.9,1.1 -1,-1 1.1,-1.9zM334.3,73.8l1,-1 1.9,1.1 1.9,-1.1 1,1 -1.1,1.9 1.1,1.9 -1,1 -1.9,-1.1 -1.9,1.1 -1,-1 1.1,-1.9zM336.3,74.4l1,-1 1.9,1.1 1.9,-1.1 1,1 -1.1,1.9 1.1,1.9 -1,1 -1.9,-1.1 -1.9,1.1 -1,-1 1.1,-1.9zM339.6,74.1l1,-1 1.9,1.1 1.9,-1.1 1,1 -1.1,1.9 1.1,1.9 -1,1 -1.9,-1.1 -1.9,1.1 -1,-1 1.1,-1.9zM341.4,73.7l1,-1 1.9,1.1 1.9,-1.1 1,1 -1.1,1.9 1.1,1.9 -1,1 -1.9,-1.1 -1.9,1.1 -1,-1 1.1,-1.9zM344.3,73.8l1,-1 1.9,1.1 1.9,-1.1 1,1 -1.1,1.9 1.1,1.9 -1,1 -1.9,-1.1 -1.9,1.1 -1,-1 1.1,-1.9zM334.3,77.2l1,-1 1.9,1.1 1.9,-1.1 1,1 -1.1,1.9 1.1,1.9 -1,1 -1.9,-1.1 -1.9,1.1 -1,-1 1.1,-1.9zM336.1,76.5l1,-1 1.9,1.1 1.9,-1.1 1,1 -1.1,1.9 1.1,1.9 -1,1 -1.9,-1.1 -1.9,1.1 -1,-1 1.1,-1.9zM339.5,77.0l1,-1 1.9,1.1 1.9,-1.1 1,1 -1.1,1.9 1.1,1.9 -1,1 -1.9,-1.1 -1.9,1.1 -1,-1 1.1,-1.9zM342.1,76.6l1,-1 1.9,1.1 1.9,-1.1 1,1 -1.1,1.9 1.1,1.9 -1,1 -1.9,-1.1 -1.9,1.1 -1,-1 1.1,-1.9zM343.9,76.6l1,-1 1.9,1.1 1.9,-1.1 1,1 -1.1,1.9 1.1,1.9 -1,1 -1.9,-1.1 -1.9,1.1 -1,-1 1.1,-1.9zM287.2,80.4l1,-1 1.9,1.1 1.9,-1.1 1,1 -1.1,1.9 1.1,1.9 -1,1 -1.9,-1.1 -1.9,1.1 -1,-1 1.1,-1.9zM289.2,80.6l1,-1 1.9,1.1 1.9,-1.1 1,1 -1.1,1.9 1.1,1.9 -1,1 -1.9,-1.1 -1.9,1.1 -1,-1 1.1,-1.9zM291.9,80.6l1,-1 1.9,1.1 1.9,-1.1 1,1 -1.1,1.9 1.1,1.9 -1,1 -1.9,-1.1 -1.9,1.1 -1,-1 1.1,-1.9zM295.1,80.3l1,-1 1.9,1.1 1.9,-1.1 1,1 -1.1,1.9 1.1,1.9 -1,1 -1.9,-1.1 -1.9,1.1 -1,-1 1.1,-1.9zM286.2,83.8l1,-1 1.9,1.1 1.9,-1.1 1,1 -1.1,1.9 1.1,1.9 -1,1 -1.9,-1.1 -1.9,1.1 -1,-1 1.1,-1.9zM289.9,83.9l1,-1 1.9,1.1 1.9,-1.1 1,1 -1.1,1.9 1.1,1.9 -1,1 -1.9,-1.1 -1.9,1.1 -1,-1 1.1,-1.9zM291.9,83.8l1,-1 1.9,1.1 1.9,-1.1 1,1 -1.1,1.9 1.1,1.9 -1,1 -1.9,-1.1 -1.9,1.1 -1,-1 1.1,-1.9zM295.1,83.0l1,-1 1.9,1.1 1.9,-1.1 1,1 -1.1,1.9 1.1,1.9 -1,1 -1.9,-1.1 -1.9,1.1 -1,-1 1.1,-1.9zM287.1,86.3l1,-1 1.9,1.1 1.9,-1.1 1,1 -1.1,1.9 1.1,1.9 -1,1 -1.9,-1.1 -1.9,1.1 -1,-1 1.1,-1.9zM289.6,85.9l1,-1 1.9,1.1 1.9,-1.1 1,1 -1.1,1.9 1.1,1.9 -1,1 -1.9,-1.1 -1.9,1.1 -1,-1 1.1,-1.9zM291.7,85.7l1,-1 1.9,1.1 1.9,-1.1 1,1 -1.1,1.9 1.1,1.9 -1,1 -1.9,-1.1 -1.9,1.1 -1,-1 1.1,-1.9zM294.3,85.4l1,-1 1.9,1.1 1.9,-1.1 1,1 -1.1,1.9 1.1,1.9 -1,1 -1.9,-1.1 -1.9,1.1 -1,-1 1.1,-1.9zM286.9,88.2l1,-1 1.9,1.1 1.9,-1.1 1,1 -1.1,1.9 1.1,1.9 -1,1 -1.9,-1.1 -1.9,1.1 -1,-1 1.1,-1.9zM289.8,88.0l1,-1 1.9,1.1 1.9,-1.1 1,1 -1.1,1.9 1.1,1.9 -1,1 -1.9,-1.1 -1.9,1.1 -1,-1 1.1,-1.9zM292.5,88.7l1,-1 1.9,1.1 1.9,-1.1 1,1 -1.1,1.9 1.1,1.9 -1,1 -1.9,-1.1 -1.9,1.1 -1,-1 1.1,-1.9zM287.3,91.6l1,-1 1.9,1.1 1.9,-1.1 1,1 -1.1,1.9 1.1,1.9 -1,1 -1.9,-1.1 -1.9,1.1 -1,-1 1.1,-1.9zM289.9,91.2l1,-1 1.9,1.1 1.9,-1.1 1,1 -1.1,1.9 1.1,1.9 -1,1 -1.9,-1.1 -1.9,1.1 -1,-1 1.1,-1.9zM291.4,91.4l1,-1 1.9,1.1 1.9,-1.1 1,1 -1.1,1.9 1.1,1.9 -1,1 -1.9,-1.1 -1.9,1.1 -1,-1 1.1,-1.9z" fill="#0055a4" stroke="#0055a4" stroke-width=".5" stroke-linejoin="round"/><g>
<rect x="5.4" y="5" width="15.4" height="15" fill="#fff" stroke="#c9c9c9" stroke-width=".5" rx=".8"/>
<rect x="5.4" y="21" width="15.4" height="14.4" fill="#fff" stroke="#8fb0d8" stroke-width=".9" rx=".8"/>
<path d="M10.1,12.5 H16.1 M13.1,9.5 V15.5" stroke="#444" stroke-width="1.5" fill="none"/>
<path d="M10.1,28.2 H16.1" stroke="#444" stroke-width="1.6" fill="none"/>
<rect x="31.4" y="5.4" width="49.8" height="15.4" fill="#fff" stroke="#d0d0d0" stroke-width=".4" rx=".8"/>
<path d="M54.6,5.6 V20.6" stroke="#e6e6e6" stroke-width=".6"/>
<text x="43" y="15.2" font-family="Liberation Sans" font-size="5.9" font-weight="bold" fill="#111" text-anchor="middle">Karte</text>
<text x="68" y="15.2" font-family="Liberation Sans" font-size="6.2" fill="#555" text-anchor="middle">Satellit</text>
<rect x="605.8" y="5.3" width="13.4" height="13.3" fill="#fff" rx=".8"/>
<path d="M609.2,11 V8.6 H611.6 M613.6,8.6 H616 V11 M616,13 V15.4 H613.6 M611.6,15.4 H609.2 V13" stroke="#555" stroke-width="1.1" fill="none"/>
</g>
</svg><!--MAPEND-->
</div>
</body>
</html>
